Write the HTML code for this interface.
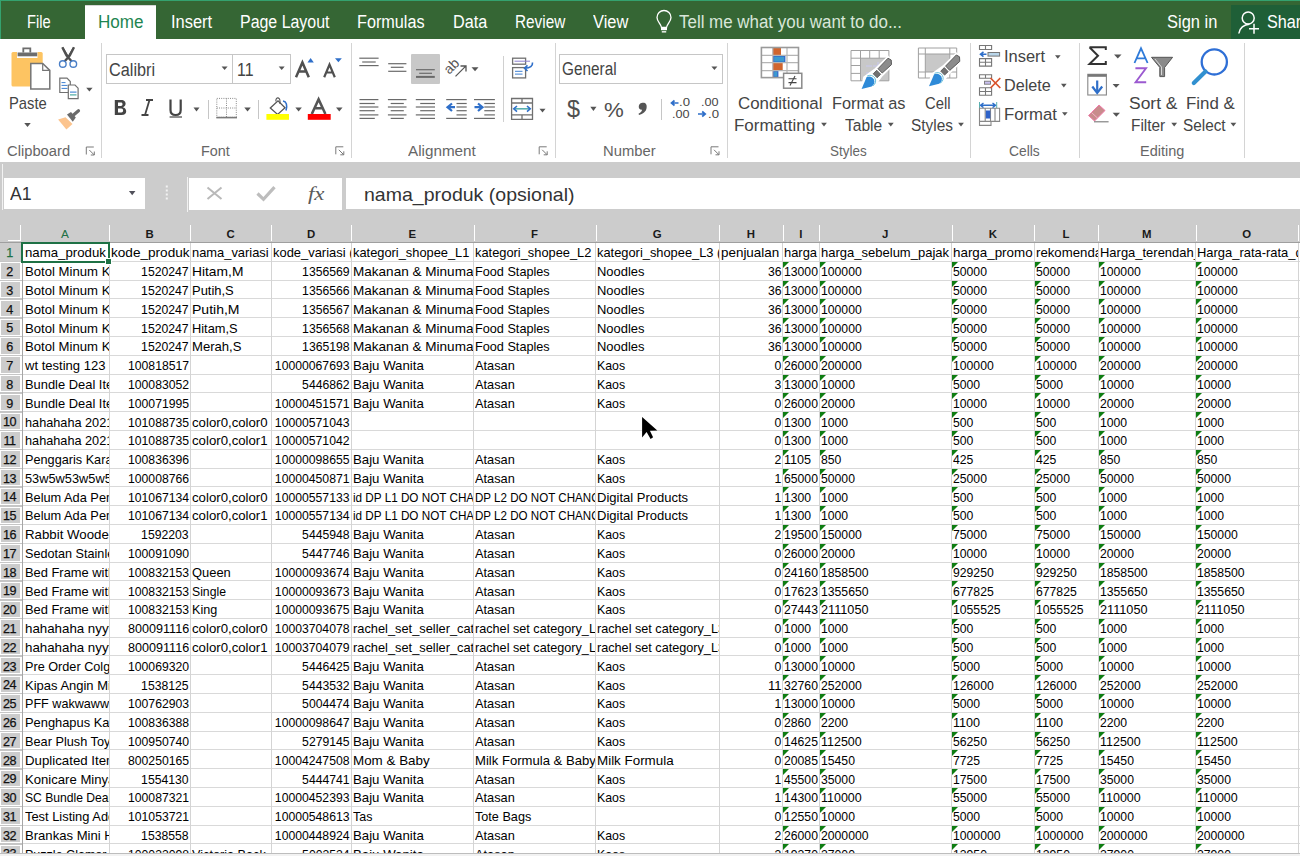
<!DOCTYPE html>
<html><head><meta charset="utf-8"><style>
html,body{margin:0;padding:0;}
body{width:1300px;height:856px;position:relative;overflow:hidden;background:#fff;font-family:"Liberation Sans", sans-serif;}
.t{position:absolute;white-space:pre;line-height:normal;}
.c{position:absolute;height:18px;overflow:hidden;font-size:13px;line-height:normal;color:#000;}
.c>div{margin-top:2.80px;}
.tri{position:absolute;width:0;height:0;border-top:6.5px solid #0e7d12;border-right:6.5px solid transparent;}
</style></head><body>
<div style='position:absolute;left:0px;top:0px;width:1300px;height:39px;background:#356634;'></div><div style='position:absolute;left:0px;top:0px;width:1300px;height:1px;background:#34a26f;'></div><div style='position:absolute;left:0px;top:0px;width:1px;height:39px;background:#34a26f;'></div><div style='position:absolute;left:85px;top:5px;width:71px;height:34px;background:#ffffff;'></div><div style='position:absolute;left:85px;top:5px;width:71px;height:1px;background:#d6d6d6;'></div><div style='position:absolute;left:1231px;top:5px;width:69px;height:34px;background:#1f5f37;'></div><div style='position:absolute;left:0px;top:39px;width:1300px;height:123px;background:#ffffff;'></div><div style='position:absolute;left:101px;top:43px;width:1px;height:115px;background:#d4d4d4;'></div><div style='position:absolute;left:351px;top:43px;width:1px;height:115px;background:#d4d4d4;'></div><div style='position:absolute;left:555px;top:43px;width:1px;height:115px;background:#d4d4d4;'></div><div style='position:absolute;left:727px;top:43px;width:1px;height:115px;background:#d4d4d4;'></div><div style='position:absolute;left:970px;top:43px;width:1px;height:115px;background:#d4d4d4;'></div><div style='position:absolute;left:1079px;top:43px;width:1px;height:115px;background:#d4d4d4;'></div><div style='position:absolute;left:1244px;top:43px;width:1px;height:115px;background:#d4d4d4;'></div><div style='position:absolute;left:105.5px;top:54px;width:126px;height:28px;border:1px solid #c6c6c6;background:#fff'></div><div style='position:absolute;left:232px;top:54px;width:57px;height:28px;border:1px solid #c6c6c6;border-left:1px solid #c6c6c6;background:#fff'></div><div style='position:absolute;left:559px;top:54px;width:162px;height:28px;border:1px solid #c6c6c6;background:#fff'></div><div style='position:absolute;left:0px;top:162px;width:1300px;height:80px;background:#cccccc;'></div><div style='position:absolute;left:4px;top:178px;width:141px;height:31px;background:#ffffff;'></div><div style='position:absolute;left:189px;top:178px;width:153px;height:32px;background:#ffffff;'></div><div style='position:absolute;left:346px;top:178px;width:954px;height:31px;background:#ffffff;'></div><div style='position:absolute;left:0px;top:242px;width:1300px;height:1px;background:#9f9f9f;'></div><div style='position:absolute;left:109px;top:225px;width:1px;height:16px;background:#ffffff'></div><div style='position:absolute;left:190px;top:225px;width:1px;height:16px;background:#ffffff'></div><div style='position:absolute;left:271px;top:225px;width:1px;height:16px;background:#ffffff'></div><div style='position:absolute;left:351px;top:225px;width:1px;height:16px;background:#ffffff'></div><div style='position:absolute;left:473.5px;top:225px;width:1px;height:16px;background:#ffffff'></div><div style='position:absolute;left:595.5px;top:225px;width:1px;height:16px;background:#ffffff'></div><div style='position:absolute;left:719px;top:225px;width:1px;height:16px;background:#ffffff'></div><div style='position:absolute;left:782.5px;top:225px;width:1px;height:16px;background:#ffffff'></div><div style='position:absolute;left:819px;top:225px;width:1px;height:16px;background:#ffffff'></div><div style='position:absolute;left:951.5px;top:225px;width:1px;height:16px;background:#ffffff'></div><div style='position:absolute;left:1034px;top:225px;width:1px;height:16px;background:#ffffff'></div><div style='position:absolute;left:1098px;top:225px;width:1px;height:16px;background:#ffffff'></div><div style='position:absolute;left:1195.5px;top:225px;width:1px;height:16px;background:#ffffff'></div><div style='position:absolute;left:1298px;top:225px;width:1px;height:16px;background:#ffffff'></div><div style='position:absolute;left:0px;top:243px;width:22px;height:613px;background:#c6c6c6;'></div><div style='position:absolute;left:21.6px;top:243px;width:1.4px;height:613px;background:#a6a6a6;'></div><div style='position:absolute;left:0px;top:243px;width:21.5px;height:17.889999999999986px;background:#cccccc;'></div><div style='position:absolute;left:0;top:262.29px;width:21.5px;height:17.39px;background:#ffffff'></div><div style='position:absolute;left:1.2px;top:263.29px;width:18.6px;height:15.39px;background:#cccccc'></div><div style='position:absolute;left:0;top:281.08px;width:21.5px;height:17.39px;background:#ffffff'></div><div style='position:absolute;left:1.2px;top:282.08px;width:18.6px;height:15.39px;background:#cccccc'></div><div style='position:absolute;left:0;top:299.87px;width:21.5px;height:17.39px;background:#ffffff'></div><div style='position:absolute;left:1.2px;top:300.87px;width:18.6px;height:15.39px;background:#cccccc'></div><div style='position:absolute;left:0;top:318.66px;width:21.5px;height:17.39px;background:#ffffff'></div><div style='position:absolute;left:1.2px;top:319.66px;width:18.6px;height:15.39px;background:#cccccc'></div><div style='position:absolute;left:0;top:337.45px;width:21.5px;height:17.39px;background:#ffffff'></div><div style='position:absolute;left:1.2px;top:338.45px;width:18.6px;height:15.39px;background:#cccccc'></div><div style='position:absolute;left:0;top:356.24px;width:21.5px;height:17.39px;background:#ffffff'></div><div style='position:absolute;left:1.2px;top:357.24px;width:18.6px;height:15.39px;background:#cccccc'></div><div style='position:absolute;left:0;top:375.03px;width:21.5px;height:17.39px;background:#ffffff'></div><div style='position:absolute;left:1.2px;top:376.03px;width:18.6px;height:15.39px;background:#cccccc'></div><div style='position:absolute;left:0;top:393.82px;width:21.5px;height:17.39px;background:#ffffff'></div><div style='position:absolute;left:1.2px;top:394.82px;width:18.6px;height:15.39px;background:#cccccc'></div><div style='position:absolute;left:0;top:412.61px;width:21.5px;height:17.39px;background:#ffffff'></div><div style='position:absolute;left:1.2px;top:413.61px;width:18.6px;height:15.39px;background:#cccccc'></div><div style='position:absolute;left:0;top:431.40px;width:21.5px;height:17.39px;background:#ffffff'></div><div style='position:absolute;left:1.2px;top:432.40px;width:18.6px;height:15.39px;background:#cccccc'></div><div style='position:absolute;left:0;top:450.19px;width:21.5px;height:17.39px;background:#ffffff'></div><div style='position:absolute;left:1.2px;top:451.19px;width:18.6px;height:15.39px;background:#cccccc'></div><div style='position:absolute;left:0;top:468.98px;width:21.5px;height:17.39px;background:#ffffff'></div><div style='position:absolute;left:1.2px;top:469.98px;width:18.6px;height:15.39px;background:#cccccc'></div><div style='position:absolute;left:0;top:487.77px;width:21.5px;height:17.39px;background:#ffffff'></div><div style='position:absolute;left:1.2px;top:488.77px;width:18.6px;height:15.39px;background:#cccccc'></div><div style='position:absolute;left:0;top:506.56px;width:21.5px;height:17.39px;background:#ffffff'></div><div style='position:absolute;left:1.2px;top:507.56px;width:18.6px;height:15.39px;background:#cccccc'></div><div style='position:absolute;left:0;top:525.35px;width:21.5px;height:17.39px;background:#ffffff'></div><div style='position:absolute;left:1.2px;top:526.35px;width:18.6px;height:15.39px;background:#cccccc'></div><div style='position:absolute;left:0;top:544.14px;width:21.5px;height:17.39px;background:#ffffff'></div><div style='position:absolute;left:1.2px;top:545.14px;width:18.6px;height:15.39px;background:#cccccc'></div><div style='position:absolute;left:0;top:562.93px;width:21.5px;height:17.39px;background:#ffffff'></div><div style='position:absolute;left:1.2px;top:563.93px;width:18.6px;height:15.39px;background:#cccccc'></div><div style='position:absolute;left:0;top:581.72px;width:21.5px;height:17.39px;background:#ffffff'></div><div style='position:absolute;left:1.2px;top:582.72px;width:18.6px;height:15.39px;background:#cccccc'></div><div style='position:absolute;left:0;top:600.51px;width:21.5px;height:17.39px;background:#ffffff'></div><div style='position:absolute;left:1.2px;top:601.51px;width:18.6px;height:15.39px;background:#cccccc'></div><div style='position:absolute;left:0;top:619.30px;width:21.5px;height:17.39px;background:#ffffff'></div><div style='position:absolute;left:1.2px;top:620.30px;width:18.6px;height:15.39px;background:#cccccc'></div><div style='position:absolute;left:0;top:638.09px;width:21.5px;height:17.39px;background:#ffffff'></div><div style='position:absolute;left:1.2px;top:639.09px;width:18.6px;height:15.39px;background:#cccccc'></div><div style='position:absolute;left:0;top:656.88px;width:21.5px;height:17.39px;background:#ffffff'></div><div style='position:absolute;left:1.2px;top:657.88px;width:18.6px;height:15.39px;background:#cccccc'></div><div style='position:absolute;left:0;top:675.67px;width:21.5px;height:17.39px;background:#ffffff'></div><div style='position:absolute;left:1.2px;top:676.67px;width:18.6px;height:15.39px;background:#cccccc'></div><div style='position:absolute;left:0;top:694.46px;width:21.5px;height:17.39px;background:#ffffff'></div><div style='position:absolute;left:1.2px;top:695.46px;width:18.6px;height:15.39px;background:#cccccc'></div><div style='position:absolute;left:0;top:713.25px;width:21.5px;height:17.39px;background:#ffffff'></div><div style='position:absolute;left:1.2px;top:714.25px;width:18.6px;height:15.39px;background:#cccccc'></div><div style='position:absolute;left:0;top:732.04px;width:21.5px;height:17.39px;background:#ffffff'></div><div style='position:absolute;left:1.2px;top:733.04px;width:18.6px;height:15.39px;background:#cccccc'></div><div style='position:absolute;left:0;top:750.83px;width:21.5px;height:17.39px;background:#ffffff'></div><div style='position:absolute;left:1.2px;top:751.83px;width:18.6px;height:15.39px;background:#cccccc'></div><div style='position:absolute;left:0;top:769.62px;width:21.5px;height:17.39px;background:#ffffff'></div><div style='position:absolute;left:1.2px;top:770.62px;width:18.6px;height:15.39px;background:#cccccc'></div><div style='position:absolute;left:0;top:788.41px;width:21.5px;height:17.39px;background:#ffffff'></div><div style='position:absolute;left:1.2px;top:789.41px;width:18.6px;height:15.39px;background:#cccccc'></div><div style='position:absolute;left:0;top:807.20px;width:21.5px;height:17.39px;background:#ffffff'></div><div style='position:absolute;left:1.2px;top:808.20px;width:18.6px;height:15.39px;background:#cccccc'></div><div style='position:absolute;left:0;top:825.99px;width:21.5px;height:17.39px;background:#ffffff'></div><div style='position:absolute;left:1.2px;top:826.99px;width:18.6px;height:15.39px;background:#cccccc'></div><div style='position:absolute;left:0;top:844.78px;width:21.5px;height:17.39px;background:#ffffff'></div><div style='position:absolute;left:1.2px;top:845.78px;width:18.6px;height:15.39px;background:#cccccc'></div><div style='position:absolute;left:23px;top:243px;width:1277px;height:613px;background:#ffffff;'></div><div style='position:absolute;left:23px;top:260.89px;width:1277px;height:1px;background:#d9d9d9'></div><div style='position:absolute;left:23px;top:279.68px;width:1277px;height:1px;background:#d9d9d9'></div><div style='position:absolute;left:23px;top:298.47px;width:1277px;height:1px;background:#d9d9d9'></div><div style='position:absolute;left:23px;top:317.26px;width:1277px;height:1px;background:#d9d9d9'></div><div style='position:absolute;left:23px;top:336.05px;width:1277px;height:1px;background:#d9d9d9'></div><div style='position:absolute;left:23px;top:354.84px;width:1277px;height:1px;background:#d9d9d9'></div><div style='position:absolute;left:23px;top:373.63px;width:1277px;height:1px;background:#d9d9d9'></div><div style='position:absolute;left:23px;top:392.42px;width:1277px;height:1px;background:#d9d9d9'></div><div style='position:absolute;left:23px;top:411.21px;width:1277px;height:1px;background:#d9d9d9'></div><div style='position:absolute;left:23px;top:430.00px;width:1277px;height:1px;background:#d9d9d9'></div><div style='position:absolute;left:23px;top:448.79px;width:1277px;height:1px;background:#d9d9d9'></div><div style='position:absolute;left:23px;top:467.58px;width:1277px;height:1px;background:#d9d9d9'></div><div style='position:absolute;left:23px;top:486.37px;width:1277px;height:1px;background:#d9d9d9'></div><div style='position:absolute;left:23px;top:505.16px;width:1277px;height:1px;background:#d9d9d9'></div><div style='position:absolute;left:23px;top:523.95px;width:1277px;height:1px;background:#d9d9d9'></div><div style='position:absolute;left:23px;top:542.74px;width:1277px;height:1px;background:#d9d9d9'></div><div style='position:absolute;left:23px;top:561.53px;width:1277px;height:1px;background:#d9d9d9'></div><div style='position:absolute;left:23px;top:580.32px;width:1277px;height:1px;background:#d9d9d9'></div><div style='position:absolute;left:23px;top:599.11px;width:1277px;height:1px;background:#d9d9d9'></div><div style='position:absolute;left:23px;top:617.90px;width:1277px;height:1px;background:#d9d9d9'></div><div style='position:absolute;left:23px;top:636.69px;width:1277px;height:1px;background:#d9d9d9'></div><div style='position:absolute;left:23px;top:655.48px;width:1277px;height:1px;background:#d9d9d9'></div><div style='position:absolute;left:23px;top:674.27px;width:1277px;height:1px;background:#d9d9d9'></div><div style='position:absolute;left:23px;top:693.06px;width:1277px;height:1px;background:#d9d9d9'></div><div style='position:absolute;left:23px;top:711.85px;width:1277px;height:1px;background:#d9d9d9'></div><div style='position:absolute;left:23px;top:730.64px;width:1277px;height:1px;background:#d9d9d9'></div><div style='position:absolute;left:23px;top:749.43px;width:1277px;height:1px;background:#d9d9d9'></div><div style='position:absolute;left:23px;top:768.22px;width:1277px;height:1px;background:#d9d9d9'></div><div style='position:absolute;left:23px;top:787.01px;width:1277px;height:1px;background:#d9d9d9'></div><div style='position:absolute;left:23px;top:805.80px;width:1277px;height:1px;background:#d9d9d9'></div><div style='position:absolute;left:23px;top:824.59px;width:1277px;height:1px;background:#d9d9d9'></div><div style='position:absolute;left:23px;top:843.38px;width:1277px;height:1px;background:#d9d9d9'></div><div style='position:absolute;left:23px;top:862.17px;width:1277px;height:1px;background:#d9d9d9'></div><div style='position:absolute;left:108.5px;top:243px;width:1px;height:613px;background:#d4d4d4'></div><div style='position:absolute;left:189.5px;top:243px;width:1px;height:613px;background:#d4d4d4'></div><div style='position:absolute;left:270.5px;top:243px;width:1px;height:613px;background:#d4d4d4'></div><div style='position:absolute;left:350.5px;top:243px;width:1px;height:613px;background:#d4d4d4'></div><div style='position:absolute;left:473.0px;top:243px;width:1px;height:613px;background:#d4d4d4'></div><div style='position:absolute;left:595.0px;top:243px;width:1px;height:613px;background:#d4d4d4'></div><div style='position:absolute;left:718.5px;top:243px;width:1px;height:613px;background:#d4d4d4'></div><div style='position:absolute;left:782.0px;top:243px;width:1px;height:613px;background:#d4d4d4'></div><div style='position:absolute;left:818.5px;top:243px;width:1px;height:613px;background:#d4d4d4'></div><div style='position:absolute;left:951.0px;top:243px;width:1px;height:613px;background:#d4d4d4'></div><div style='position:absolute;left:1033.5px;top:243px;width:1px;height:613px;background:#d4d4d4'></div><div style='position:absolute;left:1097.5px;top:243px;width:1px;height:613px;background:#d4d4d4'></div><div style='position:absolute;left:1195.0px;top:243px;width:1px;height:613px;background:#d4d4d4'></div><div style='position:absolute;left:1297.5px;top:243px;width:1px;height:613px;background:#d4d4d4'></div><div style='position:absolute;left:207.7px;top:99.6px;width:1px;height:19px;background:#c6c6c6;'></div><div style='position:absolute;left:258.3px;top:99.6px;width:1px;height:19px;background:#c6c6c6;'></div><div style='position:absolute;left:411.3px;top:54px;width:28.5px;height:29.7px;background:#c8c8c8;border-radius:1px;'></div><div style='position:absolute;left:503.4px;top:55.7px;width:1px;height:66px;background:#d0d0d0;'></div><div style='position:absolute;left:661px;top:99px;width:1px;height:20.7px;background:#c6c6c6;'></div>
<div class='c' style='left:21.5px;top:242.60px;width:87px'><div style='position:absolute;left:3.0px;top:0;white-space:pre;transform:scaleX(1.017);transform-origin:0 0'>nama_produk (opsional)</div></div><div class='c' style='left:109.5px;top:242.60px;width:80px'><div style='position:absolute;left:1.4px;top:0;white-space:pre;transform:scaleX(1.045);transform-origin:0 0'>kode_produk</div></div><div class='c' style='left:190.5px;top:242.60px;width:80px'><div style='position:absolute;left:1.4px;top:0;white-space:pre;transform:scaleX(0.991);transform-origin:0 0'>nama_variasi (opsional)</div></div><div class='c' style='left:271.5px;top:242.60px;width:79px'><div style='position:absolute;left:1.4px;top:0;white-space:pre;transform:scaleX(0.994);transform-origin:0 0'>kode_variasi (opsional)</div></div><div class='c' style='left:351.5px;top:242.60px;width:121.5px'><div style='position:absolute;left:1.4px;top:0;white-space:pre;transform:scaleX(0.988);transform-origin:0 0'>kategori_shopee_L1</div></div><div class='c' style='left:474.0px;top:242.60px;width:121.0px'><div style='position:absolute;left:1.4px;top:0;white-space:pre;transform:scaleX(0.988);transform-origin:0 0'>kategori_shopee_L2</div></div><div class='c' style='left:596.0px;top:242.60px;width:122.5px'><div style='position:absolute;left:1.4px;top:0;white-space:pre;transform:scaleX(0.989);transform-origin:0 0'>kategori_shopee_L3 (opsional)</div></div><div class='c' style='left:719.5px;top:242.60px;width:62.5px'><div style='position:absolute;left:1.4px;top:0;white-space:pre;transform:scaleX(1.032);transform-origin:0 0'>penjualan</div></div><div class='c' style='left:783.0px;top:242.60px;width:35.5px'><div style='position:absolute;left:1.4px;top:0;white-space:pre;transform:scaleX(0.992);transform-origin:0 0'>harga</div></div><div class='c' style='left:819.5px;top:242.60px;width:131.5px'><div style='position:absolute;left:1.4px;top:0;white-space:pre;transform:scaleX(1.001);transform-origin:0 0'>harga_sebelum_pajak</div></div><div class='c' style='left:952.0px;top:242.60px;width:81.5px'><div style='position:absolute;left:1.4px;top:0;white-space:pre;transform:scaleX(1.029);transform-origin:0 0'>harga_promo</div></div><div class='c' style='left:1034.5px;top:242.60px;width:63px'><div style='position:absolute;left:1.4px;top:0;white-space:pre;transform:scaleX(1.016);transform-origin:0 0'>rekomendasi</div></div><div class='c' style='left:1098.5px;top:242.60px;width:96.5px'><div style='position:absolute;left:1.4px;top:0;white-space:pre;transform:scaleX(0.997);transform-origin:0 0'>Harga_terendah_</div></div><div class='c' style='left:1196.0px;top:242.60px;width:101.5px'><div style='position:absolute;left:1.4px;top:0;white-space:pre;transform:scaleX(0.995);transform-origin:0 0'>Harga_rata-rata_d</div></div><div class='c' style='left:21.5px;top:261.39px;width:87px'><div style='position:absolute;left:3.0px;top:0;white-space:pre;transform:scaleX(1.011);transform-origin:0 0'>Botol Minum Kaca</div></div><div class='c' style='left:109.5px;top:261.39px;width:80px'><div style='position:absolute;right:0.6px;top:0;white-space:pre;transform:scaleX(0.939);transform-origin:100% 0'>1520247</div></div><div class='c' style='left:190.5px;top:261.39px;width:80px'><div style='position:absolute;left:1.4px;top:0;white-space:pre;transform:scaleX(1.062);transform-origin:0 0'>Hitam,M</div></div><div class='c' style='left:271.5px;top:261.39px;width:79px'><div style='position:absolute;right:0.6px;top:0;white-space:pre;transform:scaleX(0.939);transform-origin:100% 0'>1356569</div></div><div class='c' style='left:351.5px;top:261.39px;width:121.5px'><div style='position:absolute;left:1.4px;top:0;white-space:pre;transform:scaleX(1.042);transform-origin:0 0'>Makanan &amp; Minuman</div></div><div class='c' style='left:474.0px;top:261.39px;width:121.0px'><div style='position:absolute;left:1.4px;top:0;white-space:pre;transform:scaleX(0.975);transform-origin:0 0'>Food Staples</div></div><div class='c' style='left:596.0px;top:261.39px;width:122.5px'><div style='position:absolute;left:1.4px;top:0;white-space:pre;transform:scaleX(0.996);transform-origin:0 0'>Noodles</div></div><div class='c' style='left:719.5px;top:261.39px;width:62.5px'><div style='position:absolute;right:0.6px;top:0;white-space:pre;transform:scaleX(0.939);transform-origin:100% 0'>36</div></div><div class='c' style='left:783.0px;top:261.39px;width:35.5px'><div style='position:absolute;left:1.2px;top:0;white-space:pre;transform:scaleX(0.939);transform-origin:0 0'>13000</div></div><div class='tri' style='left:783.0px;top:261.89px'></div><div class='c' style='left:819.5px;top:261.39px;width:131.5px'><div style='position:absolute;left:1.2px;top:0;white-space:pre;transform:scaleX(0.939);transform-origin:0 0'>100000</div></div><div class='tri' style='left:819.5px;top:261.89px'></div><div class='c' style='left:952.0px;top:261.39px;width:81.5px'><div style='position:absolute;left:1.2px;top:0;white-space:pre;transform:scaleX(0.939);transform-origin:0 0'>50000</div></div><div class='tri' style='left:952.0px;top:261.89px'></div><div class='c' style='left:1034.5px;top:261.39px;width:63px'><div style='position:absolute;left:1.2px;top:0;white-space:pre;transform:scaleX(0.939);transform-origin:0 0'>50000</div></div><div class='tri' style='left:1034.5px;top:261.89px'></div><div class='c' style='left:1098.5px;top:261.39px;width:96.5px'><div style='position:absolute;left:1.2px;top:0;white-space:pre;transform:scaleX(0.939);transform-origin:0 0'>100000</div></div><div class='tri' style='left:1098.5px;top:261.89px'></div><div class='c' style='left:1196.0px;top:261.39px;width:101.5px'><div style='position:absolute;left:1.2px;top:0;white-space:pre;transform:scaleX(0.939);transform-origin:0 0'>100000</div></div><div class='tri' style='left:1196.0px;top:261.89px'></div><div class='c' style='left:21.5px;top:280.18px;width:87px'><div style='position:absolute;left:3.0px;top:0;white-space:pre;transform:scaleX(1.011);transform-origin:0 0'>Botol Minum Kaca</div></div><div class='c' style='left:109.5px;top:280.18px;width:80px'><div style='position:absolute;right:0.6px;top:0;white-space:pre;transform:scaleX(0.939);transform-origin:100% 0'>1520247</div></div><div class='c' style='left:190.5px;top:280.18px;width:80px'><div style='position:absolute;left:1.4px;top:0;white-space:pre;transform:scaleX(0.995);transform-origin:0 0'>Putih,S</div></div><div class='c' style='left:271.5px;top:280.18px;width:79px'><div style='position:absolute;right:0.6px;top:0;white-space:pre;transform:scaleX(0.939);transform-origin:100% 0'>1356566</div></div><div class='c' style='left:351.5px;top:280.18px;width:121.5px'><div style='position:absolute;left:1.4px;top:0;white-space:pre;transform:scaleX(1.042);transform-origin:0 0'>Makanan &amp; Minuman</div></div><div class='c' style='left:474.0px;top:280.18px;width:121.0px'><div style='position:absolute;left:1.4px;top:0;white-space:pre;transform:scaleX(0.975);transform-origin:0 0'>Food Staples</div></div><div class='c' style='left:596.0px;top:280.18px;width:122.5px'><div style='position:absolute;left:1.4px;top:0;white-space:pre;transform:scaleX(0.996);transform-origin:0 0'>Noodles</div></div><div class='c' style='left:719.5px;top:280.18px;width:62.5px'><div style='position:absolute;right:0.6px;top:0;white-space:pre;transform:scaleX(0.939);transform-origin:100% 0'>36</div></div><div class='c' style='left:783.0px;top:280.18px;width:35.5px'><div style='position:absolute;left:1.2px;top:0;white-space:pre;transform:scaleX(0.939);transform-origin:0 0'>13000</div></div><div class='tri' style='left:783.0px;top:280.68px'></div><div class='c' style='left:819.5px;top:280.18px;width:131.5px'><div style='position:absolute;left:1.2px;top:0;white-space:pre;transform:scaleX(0.939);transform-origin:0 0'>100000</div></div><div class='tri' style='left:819.5px;top:280.68px'></div><div class='c' style='left:952.0px;top:280.18px;width:81.5px'><div style='position:absolute;left:1.2px;top:0;white-space:pre;transform:scaleX(0.939);transform-origin:0 0'>50000</div></div><div class='tri' style='left:952.0px;top:280.68px'></div><div class='c' style='left:1034.5px;top:280.18px;width:63px'><div style='position:absolute;left:1.2px;top:0;white-space:pre;transform:scaleX(0.939);transform-origin:0 0'>50000</div></div><div class='tri' style='left:1034.5px;top:280.68px'></div><div class='c' style='left:1098.5px;top:280.18px;width:96.5px'><div style='position:absolute;left:1.2px;top:0;white-space:pre;transform:scaleX(0.939);transform-origin:0 0'>100000</div></div><div class='tri' style='left:1098.5px;top:280.68px'></div><div class='c' style='left:1196.0px;top:280.18px;width:101.5px'><div style='position:absolute;left:1.2px;top:0;white-space:pre;transform:scaleX(0.939);transform-origin:0 0'>100000</div></div><div class='tri' style='left:1196.0px;top:280.68px'></div><div class='c' style='left:21.5px;top:298.97px;width:87px'><div style='position:absolute;left:3.0px;top:0;white-space:pre;transform:scaleX(1.011);transform-origin:0 0'>Botol Minum Kaca</div></div><div class='c' style='left:109.5px;top:298.97px;width:80px'><div style='position:absolute;right:0.6px;top:0;white-space:pre;transform:scaleX(0.939);transform-origin:100% 0'>1520247</div></div><div class='c' style='left:190.5px;top:298.97px;width:80px'><div style='position:absolute;left:1.4px;top:0;white-space:pre;transform:scaleX(1.078);transform-origin:0 0'>Putih,M</div></div><div class='c' style='left:271.5px;top:298.97px;width:79px'><div style='position:absolute;right:0.6px;top:0;white-space:pre;transform:scaleX(0.939);transform-origin:100% 0'>1356567</div></div><div class='c' style='left:351.5px;top:298.97px;width:121.5px'><div style='position:absolute;left:1.4px;top:0;white-space:pre;transform:scaleX(1.042);transform-origin:0 0'>Makanan &amp; Minuman</div></div><div class='c' style='left:474.0px;top:298.97px;width:121.0px'><div style='position:absolute;left:1.4px;top:0;white-space:pre;transform:scaleX(0.975);transform-origin:0 0'>Food Staples</div></div><div class='c' style='left:596.0px;top:298.97px;width:122.5px'><div style='position:absolute;left:1.4px;top:0;white-space:pre;transform:scaleX(0.996);transform-origin:0 0'>Noodles</div></div><div class='c' style='left:719.5px;top:298.97px;width:62.5px'><div style='position:absolute;right:0.6px;top:0;white-space:pre;transform:scaleX(0.939);transform-origin:100% 0'>36</div></div><div class='c' style='left:783.0px;top:298.97px;width:35.5px'><div style='position:absolute;left:1.2px;top:0;white-space:pre;transform:scaleX(0.939);transform-origin:0 0'>13000</div></div><div class='tri' style='left:783.0px;top:299.47px'></div><div class='c' style='left:819.5px;top:298.97px;width:131.5px'><div style='position:absolute;left:1.2px;top:0;white-space:pre;transform:scaleX(0.939);transform-origin:0 0'>100000</div></div><div class='tri' style='left:819.5px;top:299.47px'></div><div class='c' style='left:952.0px;top:298.97px;width:81.5px'><div style='position:absolute;left:1.2px;top:0;white-space:pre;transform:scaleX(0.939);transform-origin:0 0'>50000</div></div><div class='tri' style='left:952.0px;top:299.47px'></div><div class='c' style='left:1034.5px;top:298.97px;width:63px'><div style='position:absolute;left:1.2px;top:0;white-space:pre;transform:scaleX(0.939);transform-origin:0 0'>50000</div></div><div class='tri' style='left:1034.5px;top:299.47px'></div><div class='c' style='left:1098.5px;top:298.97px;width:96.5px'><div style='position:absolute;left:1.2px;top:0;white-space:pre;transform:scaleX(0.939);transform-origin:0 0'>100000</div></div><div class='tri' style='left:1098.5px;top:299.47px'></div><div class='c' style='left:1196.0px;top:298.97px;width:101.5px'><div style='position:absolute;left:1.2px;top:0;white-space:pre;transform:scaleX(0.939);transform-origin:0 0'>100000</div></div><div class='tri' style='left:1196.0px;top:299.47px'></div><div class='c' style='left:21.5px;top:317.76px;width:87px'><div style='position:absolute;left:3.0px;top:0;white-space:pre;transform:scaleX(1.011);transform-origin:0 0'>Botol Minum Kaca</div></div><div class='c' style='left:109.5px;top:317.76px;width:80px'><div style='position:absolute;right:0.6px;top:0;white-space:pre;transform:scaleX(0.939);transform-origin:100% 0'>1520247</div></div><div class='c' style='left:190.5px;top:317.76px;width:80px'><div style='position:absolute;left:1.4px;top:0;white-space:pre;transform:scaleX(0.986);transform-origin:0 0'>Hitam,S</div></div><div class='c' style='left:271.5px;top:317.76px;width:79px'><div style='position:absolute;right:0.6px;top:0;white-space:pre;transform:scaleX(0.939);transform-origin:100% 0'>1356568</div></div><div class='c' style='left:351.5px;top:317.76px;width:121.5px'><div style='position:absolute;left:1.4px;top:0;white-space:pre;transform:scaleX(1.042);transform-origin:0 0'>Makanan &amp; Minuman</div></div><div class='c' style='left:474.0px;top:317.76px;width:121.0px'><div style='position:absolute;left:1.4px;top:0;white-space:pre;transform:scaleX(0.975);transform-origin:0 0'>Food Staples</div></div><div class='c' style='left:596.0px;top:317.76px;width:122.5px'><div style='position:absolute;left:1.4px;top:0;white-space:pre;transform:scaleX(0.996);transform-origin:0 0'>Noodles</div></div><div class='c' style='left:719.5px;top:317.76px;width:62.5px'><div style='position:absolute;right:0.6px;top:0;white-space:pre;transform:scaleX(0.939);transform-origin:100% 0'>36</div></div><div class='c' style='left:783.0px;top:317.76px;width:35.5px'><div style='position:absolute;left:1.2px;top:0;white-space:pre;transform:scaleX(0.939);transform-origin:0 0'>13000</div></div><div class='tri' style='left:783.0px;top:318.26px'></div><div class='c' style='left:819.5px;top:317.76px;width:131.5px'><div style='position:absolute;left:1.2px;top:0;white-space:pre;transform:scaleX(0.939);transform-origin:0 0'>100000</div></div><div class='tri' style='left:819.5px;top:318.26px'></div><div class='c' style='left:952.0px;top:317.76px;width:81.5px'><div style='position:absolute;left:1.2px;top:0;white-space:pre;transform:scaleX(0.939);transform-origin:0 0'>50000</div></div><div class='tri' style='left:952.0px;top:318.26px'></div><div class='c' style='left:1034.5px;top:317.76px;width:63px'><div style='position:absolute;left:1.2px;top:0;white-space:pre;transform:scaleX(0.939);transform-origin:0 0'>50000</div></div><div class='tri' style='left:1034.5px;top:318.26px'></div><div class='c' style='left:1098.5px;top:317.76px;width:96.5px'><div style='position:absolute;left:1.2px;top:0;white-space:pre;transform:scaleX(0.939);transform-origin:0 0'>100000</div></div><div class='tri' style='left:1098.5px;top:318.26px'></div><div class='c' style='left:1196.0px;top:317.76px;width:101.5px'><div style='position:absolute;left:1.2px;top:0;white-space:pre;transform:scaleX(0.939);transform-origin:0 0'>100000</div></div><div class='tri' style='left:1196.0px;top:318.26px'></div><div class='c' style='left:21.5px;top:336.55px;width:87px'><div style='position:absolute;left:3.0px;top:0;white-space:pre;transform:scaleX(1.011);transform-origin:0 0'>Botol Minum Kaca</div></div><div class='c' style='left:109.5px;top:336.55px;width:80px'><div style='position:absolute;right:0.6px;top:0;white-space:pre;transform:scaleX(0.939);transform-origin:100% 0'>1520247</div></div><div class='c' style='left:190.5px;top:336.55px;width:80px'><div style='position:absolute;left:1.4px;top:0;white-space:pre;transform:scaleX(1.007);transform-origin:0 0'>Merah,S</div></div><div class='c' style='left:271.5px;top:336.55px;width:79px'><div style='position:absolute;right:0.6px;top:0;white-space:pre;transform:scaleX(0.939);transform-origin:100% 0'>1365198</div></div><div class='c' style='left:351.5px;top:336.55px;width:121.5px'><div style='position:absolute;left:1.4px;top:0;white-space:pre;transform:scaleX(1.042);transform-origin:0 0'>Makanan &amp; Minuman</div></div><div class='c' style='left:474.0px;top:336.55px;width:121.0px'><div style='position:absolute;left:1.4px;top:0;white-space:pre;transform:scaleX(0.975);transform-origin:0 0'>Food Staples</div></div><div class='c' style='left:596.0px;top:336.55px;width:122.5px'><div style='position:absolute;left:1.4px;top:0;white-space:pre;transform:scaleX(0.996);transform-origin:0 0'>Noodles</div></div><div class='c' style='left:719.5px;top:336.55px;width:62.5px'><div style='position:absolute;right:0.6px;top:0;white-space:pre;transform:scaleX(0.939);transform-origin:100% 0'>36</div></div><div class='c' style='left:783.0px;top:336.55px;width:35.5px'><div style='position:absolute;left:1.2px;top:0;white-space:pre;transform:scaleX(0.939);transform-origin:0 0'>13000</div></div><div class='tri' style='left:783.0px;top:337.05px'></div><div class='c' style='left:819.5px;top:336.55px;width:131.5px'><div style='position:absolute;left:1.2px;top:0;white-space:pre;transform:scaleX(0.939);transform-origin:0 0'>100000</div></div><div class='tri' style='left:819.5px;top:337.05px'></div><div class='c' style='left:952.0px;top:336.55px;width:81.5px'><div style='position:absolute;left:1.2px;top:0;white-space:pre;transform:scaleX(0.939);transform-origin:0 0'>50000</div></div><div class='tri' style='left:952.0px;top:337.05px'></div><div class='c' style='left:1034.5px;top:336.55px;width:63px'><div style='position:absolute;left:1.2px;top:0;white-space:pre;transform:scaleX(0.939);transform-origin:0 0'>50000</div></div><div class='tri' style='left:1034.5px;top:337.05px'></div><div class='c' style='left:1098.5px;top:336.55px;width:96.5px'><div style='position:absolute;left:1.2px;top:0;white-space:pre;transform:scaleX(0.939);transform-origin:0 0'>100000</div></div><div class='tri' style='left:1098.5px;top:337.05px'></div><div class='c' style='left:1196.0px;top:336.55px;width:101.5px'><div style='position:absolute;left:1.2px;top:0;white-space:pre;transform:scaleX(0.939);transform-origin:0 0'>100000</div></div><div class='tri' style='left:1196.0px;top:337.05px'></div><div class='c' style='left:21.5px;top:355.34px;width:87px'><div style='position:absolute;left:3.0px;top:0;white-space:pre;transform:scaleX(1.004);transform-origin:0 0'>wt testing 123</div></div><div class='c' style='left:109.5px;top:355.34px;width:80px'><div style='position:absolute;right:0.6px;top:0;white-space:pre;transform:scaleX(0.939);transform-origin:100% 0'>100818517</div></div><div class='c' style='left:271.5px;top:355.34px;width:79px'><div style='position:absolute;right:0.6px;top:0;white-space:pre;transform:scaleX(0.939);transform-origin:100% 0'>10000067693</div></div><div class='c' style='left:351.5px;top:355.34px;width:121.5px'><div style='position:absolute;left:1.4px;top:0;white-space:pre;transform:scaleX(1.017);transform-origin:0 0'>Baju Wanita</div></div><div class='c' style='left:474.0px;top:355.34px;width:121.0px'><div style='position:absolute;left:1.4px;top:0;white-space:pre;transform:scaleX(0.982);transform-origin:0 0'>Atasan</div></div><div class='c' style='left:596.0px;top:355.34px;width:122.5px'><div style='position:absolute;left:1.4px;top:0;white-space:pre;transform:scaleX(0.949);transform-origin:0 0'>Kaos</div></div><div class='c' style='left:719.5px;top:355.34px;width:62.5px'><div style='position:absolute;right:0.6px;top:0;white-space:pre;transform:scaleX(0.939);transform-origin:100% 0'>0</div></div><div class='c' style='left:783.0px;top:355.34px;width:35.5px'><div style='position:absolute;left:1.2px;top:0;white-space:pre;transform:scaleX(0.939);transform-origin:0 0'>26000</div></div><div class='tri' style='left:783.0px;top:355.84px'></div><div class='c' style='left:819.5px;top:355.34px;width:131.5px'><div style='position:absolute;left:1.2px;top:0;white-space:pre;transform:scaleX(0.939);transform-origin:0 0'>200000</div></div><div class='tri' style='left:819.5px;top:355.84px'></div><div class='c' style='left:952.0px;top:355.34px;width:81.5px'><div style='position:absolute;left:1.2px;top:0;white-space:pre;transform:scaleX(0.939);transform-origin:0 0'>100000</div></div><div class='tri' style='left:952.0px;top:355.84px'></div><div class='c' style='left:1034.5px;top:355.34px;width:63px'><div style='position:absolute;left:1.2px;top:0;white-space:pre;transform:scaleX(0.939);transform-origin:0 0'>100000</div></div><div class='tri' style='left:1034.5px;top:355.84px'></div><div class='c' style='left:1098.5px;top:355.34px;width:96.5px'><div style='position:absolute;left:1.2px;top:0;white-space:pre;transform:scaleX(0.939);transform-origin:0 0'>200000</div></div><div class='tri' style='left:1098.5px;top:355.84px'></div><div class='c' style='left:1196.0px;top:355.34px;width:101.5px'><div style='position:absolute;left:1.2px;top:0;white-space:pre;transform:scaleX(0.939);transform-origin:0 0'>200000</div></div><div class='tri' style='left:1196.0px;top:355.84px'></div><div class='c' style='left:21.5px;top:374.13px;width:87px'><div style='position:absolute;left:3.0px;top:0;white-space:pre;transform:scaleX(0.992);transform-origin:0 0'>Bundle Deal Item</div></div><div class='c' style='left:109.5px;top:374.13px;width:80px'><div style='position:absolute;right:0.6px;top:0;white-space:pre;transform:scaleX(0.939);transform-origin:100% 0'>100083052</div></div><div class='c' style='left:271.5px;top:374.13px;width:79px'><div style='position:absolute;right:0.6px;top:0;white-space:pre;transform:scaleX(0.939);transform-origin:100% 0'>5446862</div></div><div class='c' style='left:351.5px;top:374.13px;width:121.5px'><div style='position:absolute;left:1.4px;top:0;white-space:pre;transform:scaleX(1.017);transform-origin:0 0'>Baju Wanita</div></div><div class='c' style='left:474.0px;top:374.13px;width:121.0px'><div style='position:absolute;left:1.4px;top:0;white-space:pre;transform:scaleX(0.982);transform-origin:0 0'>Atasan</div></div><div class='c' style='left:596.0px;top:374.13px;width:122.5px'><div style='position:absolute;left:1.4px;top:0;white-space:pre;transform:scaleX(0.949);transform-origin:0 0'>Kaos</div></div><div class='c' style='left:719.5px;top:374.13px;width:62.5px'><div style='position:absolute;right:0.6px;top:0;white-space:pre;transform:scaleX(0.939);transform-origin:100% 0'>3</div></div><div class='c' style='left:783.0px;top:374.13px;width:35.5px'><div style='position:absolute;left:1.2px;top:0;white-space:pre;transform:scaleX(0.939);transform-origin:0 0'>13000</div></div><div class='tri' style='left:783.0px;top:374.63px'></div><div class='c' style='left:819.5px;top:374.13px;width:131.5px'><div style='position:absolute;left:1.2px;top:0;white-space:pre;transform:scaleX(0.939);transform-origin:0 0'>10000</div></div><div class='tri' style='left:819.5px;top:374.63px'></div><div class='c' style='left:952.0px;top:374.13px;width:81.5px'><div style='position:absolute;left:1.2px;top:0;white-space:pre;transform:scaleX(0.939);transform-origin:0 0'>5000</div></div><div class='tri' style='left:952.0px;top:374.63px'></div><div class='c' style='left:1034.5px;top:374.13px;width:63px'><div style='position:absolute;left:1.2px;top:0;white-space:pre;transform:scaleX(0.939);transform-origin:0 0'>5000</div></div><div class='tri' style='left:1034.5px;top:374.63px'></div><div class='c' style='left:1098.5px;top:374.13px;width:96.5px'><div style='position:absolute;left:1.2px;top:0;white-space:pre;transform:scaleX(0.939);transform-origin:0 0'>10000</div></div><div class='tri' style='left:1098.5px;top:374.63px'></div><div class='c' style='left:1196.0px;top:374.13px;width:101.5px'><div style='position:absolute;left:1.2px;top:0;white-space:pre;transform:scaleX(0.939);transform-origin:0 0'>10000</div></div><div class='tri' style='left:1196.0px;top:374.63px'></div><div class='c' style='left:21.5px;top:392.92px;width:87px'><div style='position:absolute;left:3.0px;top:0;white-space:pre;transform:scaleX(0.992);transform-origin:0 0'>Bundle Deal Item</div></div><div class='c' style='left:109.5px;top:392.92px;width:80px'><div style='position:absolute;right:0.6px;top:0;white-space:pre;transform:scaleX(0.939);transform-origin:100% 0'>100071995</div></div><div class='c' style='left:271.5px;top:392.92px;width:79px'><div style='position:absolute;right:0.6px;top:0;white-space:pre;transform:scaleX(0.939);transform-origin:100% 0'>10000451571</div></div><div class='c' style='left:351.5px;top:392.92px;width:121.5px'><div style='position:absolute;left:1.4px;top:0;white-space:pre;transform:scaleX(1.017);transform-origin:0 0'>Baju Wanita</div></div><div class='c' style='left:474.0px;top:392.92px;width:121.0px'><div style='position:absolute;left:1.4px;top:0;white-space:pre;transform:scaleX(0.982);transform-origin:0 0'>Atasan</div></div><div class='c' style='left:596.0px;top:392.92px;width:122.5px'><div style='position:absolute;left:1.4px;top:0;white-space:pre;transform:scaleX(0.949);transform-origin:0 0'>Kaos</div></div><div class='c' style='left:719.5px;top:392.92px;width:62.5px'><div style='position:absolute;right:0.6px;top:0;white-space:pre;transform:scaleX(0.939);transform-origin:100% 0'>0</div></div><div class='c' style='left:783.0px;top:392.92px;width:35.5px'><div style='position:absolute;left:1.2px;top:0;white-space:pre;transform:scaleX(0.939);transform-origin:0 0'>26000</div></div><div class='tri' style='left:783.0px;top:393.42px'></div><div class='c' style='left:819.5px;top:392.92px;width:131.5px'><div style='position:absolute;left:1.2px;top:0;white-space:pre;transform:scaleX(0.939);transform-origin:0 0'>20000</div></div><div class='tri' style='left:819.5px;top:393.42px'></div><div class='c' style='left:952.0px;top:392.92px;width:81.5px'><div style='position:absolute;left:1.2px;top:0;white-space:pre;transform:scaleX(0.939);transform-origin:0 0'>10000</div></div><div class='tri' style='left:952.0px;top:393.42px'></div><div class='c' style='left:1034.5px;top:392.92px;width:63px'><div style='position:absolute;left:1.2px;top:0;white-space:pre;transform:scaleX(0.939);transform-origin:0 0'>10000</div></div><div class='tri' style='left:1034.5px;top:393.42px'></div><div class='c' style='left:1098.5px;top:392.92px;width:96.5px'><div style='position:absolute;left:1.2px;top:0;white-space:pre;transform:scaleX(0.939);transform-origin:0 0'>20000</div></div><div class='tri' style='left:1098.5px;top:393.42px'></div><div class='c' style='left:1196.0px;top:392.92px;width:101.5px'><div style='position:absolute;left:1.2px;top:0;white-space:pre;transform:scaleX(0.939);transform-origin:0 0'>20000</div></div><div class='tri' style='left:1196.0px;top:393.42px'></div><div class='c' style='left:21.5px;top:411.71px;width:87px'><div style='position:absolute;left:3.0px;top:0;white-space:pre;transform:scaleX(0.977);transform-origin:0 0'>hahahaha 2021</div></div><div class='c' style='left:109.5px;top:411.71px;width:80px'><div style='position:absolute;right:0.6px;top:0;white-space:pre;transform:scaleX(0.939);transform-origin:100% 0'>101088735</div></div><div class='c' style='left:190.5px;top:411.71px;width:80px'><div style='position:absolute;left:1.4px;top:0;white-space:pre;transform:scaleX(1.016);transform-origin:0 0'>color0,color0</div></div><div class='c' style='left:271.5px;top:411.71px;width:79px'><div style='position:absolute;right:0.6px;top:0;white-space:pre;transform:scaleX(0.939);transform-origin:100% 0'>10000571043</div></div><div class='c' style='left:719.5px;top:411.71px;width:62.5px'><div style='position:absolute;right:0.6px;top:0;white-space:pre;transform:scaleX(0.939);transform-origin:100% 0'>0</div></div><div class='c' style='left:783.0px;top:411.71px;width:35.5px'><div style='position:absolute;left:1.2px;top:0;white-space:pre;transform:scaleX(0.939);transform-origin:0 0'>1300</div></div><div class='tri' style='left:783.0px;top:412.21px'></div><div class='c' style='left:819.5px;top:411.71px;width:131.5px'><div style='position:absolute;left:1.2px;top:0;white-space:pre;transform:scaleX(0.939);transform-origin:0 0'>1000</div></div><div class='tri' style='left:819.5px;top:412.21px'></div><div class='c' style='left:952.0px;top:411.71px;width:81.5px'><div style='position:absolute;left:1.2px;top:0;white-space:pre;transform:scaleX(0.939);transform-origin:0 0'>500</div></div><div class='tri' style='left:952.0px;top:412.21px'></div><div class='c' style='left:1034.5px;top:411.71px;width:63px'><div style='position:absolute;left:1.2px;top:0;white-space:pre;transform:scaleX(0.939);transform-origin:0 0'>500</div></div><div class='tri' style='left:1034.5px;top:412.21px'></div><div class='c' style='left:1098.5px;top:411.71px;width:96.5px'><div style='position:absolute;left:1.2px;top:0;white-space:pre;transform:scaleX(0.939);transform-origin:0 0'>1000</div></div><div class='tri' style='left:1098.5px;top:412.21px'></div><div class='c' style='left:1196.0px;top:411.71px;width:101.5px'><div style='position:absolute;left:1.2px;top:0;white-space:pre;transform:scaleX(0.939);transform-origin:0 0'>1000</div></div><div class='tri' style='left:1196.0px;top:412.21px'></div><div class='c' style='left:21.5px;top:430.50px;width:87px'><div style='position:absolute;left:3.0px;top:0;white-space:pre;transform:scaleX(0.977);transform-origin:0 0'>hahahaha 2021</div></div><div class='c' style='left:109.5px;top:430.50px;width:80px'><div style='position:absolute;right:0.6px;top:0;white-space:pre;transform:scaleX(0.939);transform-origin:100% 0'>101088735</div></div><div class='c' style='left:190.5px;top:430.50px;width:80px'><div style='position:absolute;left:1.4px;top:0;white-space:pre;transform:scaleX(1.016);transform-origin:0 0'>color0,color1</div></div><div class='c' style='left:271.5px;top:430.50px;width:79px'><div style='position:absolute;right:0.6px;top:0;white-space:pre;transform:scaleX(0.939);transform-origin:100% 0'>10000571042</div></div><div class='c' style='left:719.5px;top:430.50px;width:62.5px'><div style='position:absolute;right:0.6px;top:0;white-space:pre;transform:scaleX(0.939);transform-origin:100% 0'>0</div></div><div class='c' style='left:783.0px;top:430.50px;width:35.5px'><div style='position:absolute;left:1.2px;top:0;white-space:pre;transform:scaleX(0.939);transform-origin:0 0'>1300</div></div><div class='tri' style='left:783.0px;top:431.00px'></div><div class='c' style='left:819.5px;top:430.50px;width:131.5px'><div style='position:absolute;left:1.2px;top:0;white-space:pre;transform:scaleX(0.939);transform-origin:0 0'>1000</div></div><div class='tri' style='left:819.5px;top:431.00px'></div><div class='c' style='left:952.0px;top:430.50px;width:81.5px'><div style='position:absolute;left:1.2px;top:0;white-space:pre;transform:scaleX(0.939);transform-origin:0 0'>500</div></div><div class='tri' style='left:952.0px;top:431.00px'></div><div class='c' style='left:1034.5px;top:430.50px;width:63px'><div style='position:absolute;left:1.2px;top:0;white-space:pre;transform:scaleX(0.939);transform-origin:0 0'>500</div></div><div class='tri' style='left:1034.5px;top:431.00px'></div><div class='c' style='left:1098.5px;top:430.50px;width:96.5px'><div style='position:absolute;left:1.2px;top:0;white-space:pre;transform:scaleX(0.939);transform-origin:0 0'>1000</div></div><div class='tri' style='left:1098.5px;top:431.00px'></div><div class='c' style='left:1196.0px;top:430.50px;width:101.5px'><div style='position:absolute;left:1.2px;top:0;white-space:pre;transform:scaleX(0.939);transform-origin:0 0'>1000</div></div><div class='tri' style='left:1196.0px;top:431.00px'></div><div class='c' style='left:21.5px;top:449.29px;width:87px'><div style='position:absolute;left:3.0px;top:0;white-space:pre;transform:scaleX(0.976);transform-origin:0 0'>Penggaris Karakter</div></div><div class='c' style='left:109.5px;top:449.29px;width:80px'><div style='position:absolute;right:0.6px;top:0;white-space:pre;transform:scaleX(0.939);transform-origin:100% 0'>100836396</div></div><div class='c' style='left:271.5px;top:449.29px;width:79px'><div style='position:absolute;right:0.6px;top:0;white-space:pre;transform:scaleX(0.939);transform-origin:100% 0'>10000098655</div></div><div class='c' style='left:351.5px;top:449.29px;width:121.5px'><div style='position:absolute;left:1.4px;top:0;white-space:pre;transform:scaleX(1.017);transform-origin:0 0'>Baju Wanita</div></div><div class='c' style='left:474.0px;top:449.29px;width:121.0px'><div style='position:absolute;left:1.4px;top:0;white-space:pre;transform:scaleX(0.982);transform-origin:0 0'>Atasan</div></div><div class='c' style='left:596.0px;top:449.29px;width:122.5px'><div style='position:absolute;left:1.4px;top:0;white-space:pre;transform:scaleX(0.949);transform-origin:0 0'>Kaos</div></div><div class='c' style='left:719.5px;top:449.29px;width:62.5px'><div style='position:absolute;right:0.6px;top:0;white-space:pre;transform:scaleX(0.939);transform-origin:100% 0'>2</div></div><div class='c' style='left:783.0px;top:449.29px;width:35.5px'><div style='position:absolute;left:1.2px;top:0;white-space:pre;transform:scaleX(0.971);transform-origin:0 0'>1105</div></div><div class='tri' style='left:783.0px;top:449.79px'></div><div class='c' style='left:819.5px;top:449.29px;width:131.5px'><div style='position:absolute;left:1.2px;top:0;white-space:pre;transform:scaleX(0.939);transform-origin:0 0'>850</div></div><div class='tri' style='left:819.5px;top:449.79px'></div><div class='c' style='left:952.0px;top:449.29px;width:81.5px'><div style='position:absolute;left:1.2px;top:0;white-space:pre;transform:scaleX(0.939);transform-origin:0 0'>425</div></div><div class='tri' style='left:952.0px;top:449.79px'></div><div class='c' style='left:1034.5px;top:449.29px;width:63px'><div style='position:absolute;left:1.2px;top:0;white-space:pre;transform:scaleX(0.939);transform-origin:0 0'>425</div></div><div class='tri' style='left:1034.5px;top:449.79px'></div><div class='c' style='left:1098.5px;top:449.29px;width:96.5px'><div style='position:absolute;left:1.2px;top:0;white-space:pre;transform:scaleX(0.939);transform-origin:0 0'>850</div></div><div class='tri' style='left:1098.5px;top:449.79px'></div><div class='c' style='left:1196.0px;top:449.29px;width:101.5px'><div style='position:absolute;left:1.2px;top:0;white-space:pre;transform:scaleX(0.939);transform-origin:0 0'>850</div></div><div class='tri' style='left:1196.0px;top:449.79px'></div><div class='c' style='left:21.5px;top:468.08px;width:87px'><div style='position:absolute;left:3.0px;top:0;white-space:pre;transform:scaleX(0.984);transform-origin:0 0'>53w5w53w5w5w</div></div><div class='c' style='left:109.5px;top:468.08px;width:80px'><div style='position:absolute;right:0.6px;top:0;white-space:pre;transform:scaleX(0.939);transform-origin:100% 0'>100008766</div></div><div class='c' style='left:271.5px;top:468.08px;width:79px'><div style='position:absolute;right:0.6px;top:0;white-space:pre;transform:scaleX(0.939);transform-origin:100% 0'>10000450871</div></div><div class='c' style='left:351.5px;top:468.08px;width:121.5px'><div style='position:absolute;left:1.4px;top:0;white-space:pre;transform:scaleX(1.017);transform-origin:0 0'>Baju Wanita</div></div><div class='c' style='left:474.0px;top:468.08px;width:121.0px'><div style='position:absolute;left:1.4px;top:0;white-space:pre;transform:scaleX(0.982);transform-origin:0 0'>Atasan</div></div><div class='c' style='left:596.0px;top:468.08px;width:122.5px'><div style='position:absolute;left:1.4px;top:0;white-space:pre;transform:scaleX(0.949);transform-origin:0 0'>Kaos</div></div><div class='c' style='left:719.5px;top:468.08px;width:62.5px'><div style='position:absolute;right:0.6px;top:0;white-space:pre;transform:scaleX(0.939);transform-origin:100% 0'>1</div></div><div class='c' style='left:783.0px;top:468.08px;width:35.5px'><div style='position:absolute;left:1.2px;top:0;white-space:pre;transform:scaleX(0.939);transform-origin:0 0'>65000</div></div><div class='tri' style='left:783.0px;top:468.58px'></div><div class='c' style='left:819.5px;top:468.08px;width:131.5px'><div style='position:absolute;left:1.2px;top:0;white-space:pre;transform:scaleX(0.939);transform-origin:0 0'>50000</div></div><div class='tri' style='left:819.5px;top:468.58px'></div><div class='c' style='left:952.0px;top:468.08px;width:81.5px'><div style='position:absolute;left:1.2px;top:0;white-space:pre;transform:scaleX(0.939);transform-origin:0 0'>25000</div></div><div class='tri' style='left:952.0px;top:468.58px'></div><div class='c' style='left:1034.5px;top:468.08px;width:63px'><div style='position:absolute;left:1.2px;top:0;white-space:pre;transform:scaleX(0.939);transform-origin:0 0'>25000</div></div><div class='tri' style='left:1034.5px;top:468.58px'></div><div class='c' style='left:1098.5px;top:468.08px;width:96.5px'><div style='position:absolute;left:1.2px;top:0;white-space:pre;transform:scaleX(0.939);transform-origin:0 0'>50000</div></div><div class='tri' style='left:1098.5px;top:468.58px'></div><div class='c' style='left:1196.0px;top:468.08px;width:101.5px'><div style='position:absolute;left:1.2px;top:0;white-space:pre;transform:scaleX(0.939);transform-origin:0 0'>50000</div></div><div class='tri' style='left:1196.0px;top:468.58px'></div><div class='c' style='left:21.5px;top:486.87px;width:87px'><div style='position:absolute;left:3.0px;top:0;white-space:pre;transform:scaleX(0.983);transform-origin:0 0'>Belum Ada Pembeli</div></div><div class='c' style='left:109.5px;top:486.87px;width:80px'><div style='position:absolute;right:0.6px;top:0;white-space:pre;transform:scaleX(0.939);transform-origin:100% 0'>101067134</div></div><div class='c' style='left:190.5px;top:486.87px;width:80px'><div style='position:absolute;left:1.4px;top:0;white-space:pre;transform:scaleX(1.016);transform-origin:0 0'>color0,color0</div></div><div class='c' style='left:271.5px;top:486.87px;width:79px'><div style='position:absolute;right:0.6px;top:0;white-space:pre;transform:scaleX(0.939);transform-origin:100% 0'>10000557133</div></div><div class='c' style='left:351.5px;top:486.87px;width:121.5px'><div style='position:absolute;left:1.4px;top:0;white-space:pre;transform:scaleX(0.900);transform-origin:0 0'>id DP L1 DO NOT CHANGE</div></div><div class='c' style='left:474.0px;top:486.87px;width:121.0px'><div style='position:absolute;left:1.4px;top:0;white-space:pre;transform:scaleX(0.892);transform-origin:0 0'>DP L2 DO NOT CHANGE</div></div><div class='c' style='left:596.0px;top:486.87px;width:122.5px'><div style='position:absolute;left:1.4px;top:0;white-space:pre;transform:scaleX(1.001);transform-origin:0 0'>Digital Products</div></div><div class='c' style='left:719.5px;top:486.87px;width:62.5px'><div style='position:absolute;right:0.6px;top:0;white-space:pre;transform:scaleX(0.939);transform-origin:100% 0'>1</div></div><div class='c' style='left:783.0px;top:486.87px;width:35.5px'><div style='position:absolute;left:1.2px;top:0;white-space:pre;transform:scaleX(0.939);transform-origin:0 0'>1300</div></div><div class='tri' style='left:783.0px;top:487.37px'></div><div class='c' style='left:819.5px;top:486.87px;width:131.5px'><div style='position:absolute;left:1.2px;top:0;white-space:pre;transform:scaleX(0.939);transform-origin:0 0'>1000</div></div><div class='tri' style='left:819.5px;top:487.37px'></div><div class='c' style='left:952.0px;top:486.87px;width:81.5px'><div style='position:absolute;left:1.2px;top:0;white-space:pre;transform:scaleX(0.939);transform-origin:0 0'>500</div></div><div class='tri' style='left:952.0px;top:487.37px'></div><div class='c' style='left:1034.5px;top:486.87px;width:63px'><div style='position:absolute;left:1.2px;top:0;white-space:pre;transform:scaleX(0.939);transform-origin:0 0'>500</div></div><div class='tri' style='left:1034.5px;top:487.37px'></div><div class='c' style='left:1098.5px;top:486.87px;width:96.5px'><div style='position:absolute;left:1.2px;top:0;white-space:pre;transform:scaleX(0.939);transform-origin:0 0'>1000</div></div><div class='tri' style='left:1098.5px;top:487.37px'></div><div class='c' style='left:1196.0px;top:486.87px;width:101.5px'><div style='position:absolute;left:1.2px;top:0;white-space:pre;transform:scaleX(0.939);transform-origin:0 0'>1000</div></div><div class='tri' style='left:1196.0px;top:487.37px'></div><div class='c' style='left:21.5px;top:505.66px;width:87px'><div style='position:absolute;left:3.0px;top:0;white-space:pre;transform:scaleX(0.983);transform-origin:0 0'>Belum Ada Pembeli</div></div><div class='c' style='left:109.5px;top:505.66px;width:80px'><div style='position:absolute;right:0.6px;top:0;white-space:pre;transform:scaleX(0.939);transform-origin:100% 0'>101067134</div></div><div class='c' style='left:190.5px;top:505.66px;width:80px'><div style='position:absolute;left:1.4px;top:0;white-space:pre;transform:scaleX(1.016);transform-origin:0 0'>color0,color1</div></div><div class='c' style='left:271.5px;top:505.66px;width:79px'><div style='position:absolute;right:0.6px;top:0;white-space:pre;transform:scaleX(0.939);transform-origin:100% 0'>10000557134</div></div><div class='c' style='left:351.5px;top:505.66px;width:121.5px'><div style='position:absolute;left:1.4px;top:0;white-space:pre;transform:scaleX(0.900);transform-origin:0 0'>id DP L1 DO NOT CHANGE</div></div><div class='c' style='left:474.0px;top:505.66px;width:121.0px'><div style='position:absolute;left:1.4px;top:0;white-space:pre;transform:scaleX(0.892);transform-origin:0 0'>DP L2 DO NOT CHANGE</div></div><div class='c' style='left:596.0px;top:505.66px;width:122.5px'><div style='position:absolute;left:1.4px;top:0;white-space:pre;transform:scaleX(1.001);transform-origin:0 0'>Digital Products</div></div><div class='c' style='left:719.5px;top:505.66px;width:62.5px'><div style='position:absolute;right:0.6px;top:0;white-space:pre;transform:scaleX(0.939);transform-origin:100% 0'>1</div></div><div class='c' style='left:783.0px;top:505.66px;width:35.5px'><div style='position:absolute;left:1.2px;top:0;white-space:pre;transform:scaleX(0.939);transform-origin:0 0'>1300</div></div><div class='tri' style='left:783.0px;top:506.16px'></div><div class='c' style='left:819.5px;top:505.66px;width:131.5px'><div style='position:absolute;left:1.2px;top:0;white-space:pre;transform:scaleX(0.939);transform-origin:0 0'>1000</div></div><div class='tri' style='left:819.5px;top:506.16px'></div><div class='c' style='left:952.0px;top:505.66px;width:81.5px'><div style='position:absolute;left:1.2px;top:0;white-space:pre;transform:scaleX(0.939);transform-origin:0 0'>500</div></div><div class='tri' style='left:952.0px;top:506.16px'></div><div class='c' style='left:1034.5px;top:505.66px;width:63px'><div style='position:absolute;left:1.2px;top:0;white-space:pre;transform:scaleX(0.939);transform-origin:0 0'>500</div></div><div class='tri' style='left:1034.5px;top:506.16px'></div><div class='c' style='left:1098.5px;top:505.66px;width:96.5px'><div style='position:absolute;left:1.2px;top:0;white-space:pre;transform:scaleX(0.939);transform-origin:0 0'>1000</div></div><div class='tri' style='left:1098.5px;top:506.16px'></div><div class='c' style='left:1196.0px;top:505.66px;width:101.5px'><div style='position:absolute;left:1.2px;top:0;white-space:pre;transform:scaleX(0.939);transform-origin:0 0'>1000</div></div><div class='tri' style='left:1196.0px;top:506.16px'></div><div class='c' style='left:21.5px;top:524.45px;width:87px'><div style='position:absolute;left:3.0px;top:0;white-space:pre;transform:scaleX(1.020);transform-origin:0 0'>Rabbit Wooden</div></div><div class='c' style='left:109.5px;top:524.45px;width:80px'><div style='position:absolute;right:0.6px;top:0;white-space:pre;transform:scaleX(0.939);transform-origin:100% 0'>1592203</div></div><div class='c' style='left:271.5px;top:524.45px;width:79px'><div style='position:absolute;right:0.6px;top:0;white-space:pre;transform:scaleX(0.939);transform-origin:100% 0'>5445948</div></div><div class='c' style='left:351.5px;top:524.45px;width:121.5px'><div style='position:absolute;left:1.4px;top:0;white-space:pre;transform:scaleX(1.017);transform-origin:0 0'>Baju Wanita</div></div><div class='c' style='left:474.0px;top:524.45px;width:121.0px'><div style='position:absolute;left:1.4px;top:0;white-space:pre;transform:scaleX(0.982);transform-origin:0 0'>Atasan</div></div><div class='c' style='left:596.0px;top:524.45px;width:122.5px'><div style='position:absolute;left:1.4px;top:0;white-space:pre;transform:scaleX(0.949);transform-origin:0 0'>Kaos</div></div><div class='c' style='left:719.5px;top:524.45px;width:62.5px'><div style='position:absolute;right:0.6px;top:0;white-space:pre;transform:scaleX(0.939);transform-origin:100% 0'>2</div></div><div class='c' style='left:783.0px;top:524.45px;width:35.5px'><div style='position:absolute;left:1.2px;top:0;white-space:pre;transform:scaleX(0.939);transform-origin:0 0'>19500</div></div><div class='tri' style='left:783.0px;top:524.95px'></div><div class='c' style='left:819.5px;top:524.45px;width:131.5px'><div style='position:absolute;left:1.2px;top:0;white-space:pre;transform:scaleX(0.939);transform-origin:0 0'>150000</div></div><div class='tri' style='left:819.5px;top:524.95px'></div><div class='c' style='left:952.0px;top:524.45px;width:81.5px'><div style='position:absolute;left:1.2px;top:0;white-space:pre;transform:scaleX(0.939);transform-origin:0 0'>75000</div></div><div class='tri' style='left:952.0px;top:524.95px'></div><div class='c' style='left:1034.5px;top:524.45px;width:63px'><div style='position:absolute;left:1.2px;top:0;white-space:pre;transform:scaleX(0.939);transform-origin:0 0'>75000</div></div><div class='tri' style='left:1034.5px;top:524.95px'></div><div class='c' style='left:1098.5px;top:524.45px;width:96.5px'><div style='position:absolute;left:1.2px;top:0;white-space:pre;transform:scaleX(0.939);transform-origin:0 0'>150000</div></div><div class='tri' style='left:1098.5px;top:524.95px'></div><div class='c' style='left:1196.0px;top:524.45px;width:101.5px'><div style='position:absolute;left:1.2px;top:0;white-space:pre;transform:scaleX(0.939);transform-origin:0 0'>150000</div></div><div class='tri' style='left:1196.0px;top:524.95px'></div><div class='c' style='left:21.5px;top:543.24px;width:87px'><div style='position:absolute;left:3.0px;top:0;white-space:pre;transform:scaleX(0.972);transform-origin:0 0'>Sedotan Stainless</div></div><div class='c' style='left:109.5px;top:543.24px;width:80px'><div style='position:absolute;right:0.6px;top:0;white-space:pre;transform:scaleX(0.939);transform-origin:100% 0'>100091090</div></div><div class='c' style='left:271.5px;top:543.24px;width:79px'><div style='position:absolute;right:0.6px;top:0;white-space:pre;transform:scaleX(0.939);transform-origin:100% 0'>5447746</div></div><div class='c' style='left:351.5px;top:543.24px;width:121.5px'><div style='position:absolute;left:1.4px;top:0;white-space:pre;transform:scaleX(1.017);transform-origin:0 0'>Baju Wanita</div></div><div class='c' style='left:474.0px;top:543.24px;width:121.0px'><div style='position:absolute;left:1.4px;top:0;white-space:pre;transform:scaleX(0.982);transform-origin:0 0'>Atasan</div></div><div class='c' style='left:596.0px;top:543.24px;width:122.5px'><div style='position:absolute;left:1.4px;top:0;white-space:pre;transform:scaleX(0.949);transform-origin:0 0'>Kaos</div></div><div class='c' style='left:719.5px;top:543.24px;width:62.5px'><div style='position:absolute;right:0.6px;top:0;white-space:pre;transform:scaleX(0.939);transform-origin:100% 0'>0</div></div><div class='c' style='left:783.0px;top:543.24px;width:35.5px'><div style='position:absolute;left:1.2px;top:0;white-space:pre;transform:scaleX(0.939);transform-origin:0 0'>26000</div></div><div class='tri' style='left:783.0px;top:543.74px'></div><div class='c' style='left:819.5px;top:543.24px;width:131.5px'><div style='position:absolute;left:1.2px;top:0;white-space:pre;transform:scaleX(0.939);transform-origin:0 0'>20000</div></div><div class='tri' style='left:819.5px;top:543.74px'></div><div class='c' style='left:952.0px;top:543.24px;width:81.5px'><div style='position:absolute;left:1.2px;top:0;white-space:pre;transform:scaleX(0.939);transform-origin:0 0'>10000</div></div><div class='tri' style='left:952.0px;top:543.74px'></div><div class='c' style='left:1034.5px;top:543.24px;width:63px'><div style='position:absolute;left:1.2px;top:0;white-space:pre;transform:scaleX(0.939);transform-origin:0 0'>10000</div></div><div class='tri' style='left:1034.5px;top:543.74px'></div><div class='c' style='left:1098.5px;top:543.24px;width:96.5px'><div style='position:absolute;left:1.2px;top:0;white-space:pre;transform:scaleX(0.939);transform-origin:0 0'>20000</div></div><div class='tri' style='left:1098.5px;top:543.74px'></div><div class='c' style='left:1196.0px;top:543.24px;width:101.5px'><div style='position:absolute;left:1.2px;top:0;white-space:pre;transform:scaleX(0.939);transform-origin:0 0'>20000</div></div><div class='tri' style='left:1196.0px;top:543.74px'></div><div class='c' style='left:21.5px;top:562.03px;width:87px'><div style='position:absolute;left:3.0px;top:0;white-space:pre;transform:scaleX(0.991);transform-origin:0 0'>Bed Frame with</div></div><div class='c' style='left:109.5px;top:562.03px;width:80px'><div style='position:absolute;right:0.6px;top:0;white-space:pre;transform:scaleX(0.939);transform-origin:100% 0'>100832153</div></div><div class='c' style='left:190.5px;top:562.03px;width:80px'><div style='position:absolute;left:1.4px;top:0;white-space:pre;transform:scaleX(0.994);transform-origin:0 0'>Queen</div></div><div class='c' style='left:271.5px;top:562.03px;width:79px'><div style='position:absolute;right:0.6px;top:0;white-space:pre;transform:scaleX(0.939);transform-origin:100% 0'>10000093674</div></div><div class='c' style='left:351.5px;top:562.03px;width:121.5px'><div style='position:absolute;left:1.4px;top:0;white-space:pre;transform:scaleX(1.017);transform-origin:0 0'>Baju Wanita</div></div><div class='c' style='left:474.0px;top:562.03px;width:121.0px'><div style='position:absolute;left:1.4px;top:0;white-space:pre;transform:scaleX(0.982);transform-origin:0 0'>Atasan</div></div><div class='c' style='left:596.0px;top:562.03px;width:122.5px'><div style='position:absolute;left:1.4px;top:0;white-space:pre;transform:scaleX(0.949);transform-origin:0 0'>Kaos</div></div><div class='c' style='left:719.5px;top:562.03px;width:62.5px'><div style='position:absolute;right:0.6px;top:0;white-space:pre;transform:scaleX(0.939);transform-origin:100% 0'>0</div></div><div class='c' style='left:783.0px;top:562.03px;width:35.5px'><div style='position:absolute;left:1.2px;top:0;white-space:pre;transform:scaleX(0.939);transform-origin:0 0'>24160</div></div><div class='tri' style='left:783.0px;top:562.53px'></div><div class='c' style='left:819.5px;top:562.03px;width:131.5px'><div style='position:absolute;left:1.2px;top:0;white-space:pre;transform:scaleX(0.939);transform-origin:0 0'>1858500</div></div><div class='tri' style='left:819.5px;top:562.53px'></div><div class='c' style='left:952.0px;top:562.03px;width:81.5px'><div style='position:absolute;left:1.2px;top:0;white-space:pre;transform:scaleX(0.939);transform-origin:0 0'>929250</div></div><div class='tri' style='left:952.0px;top:562.53px'></div><div class='c' style='left:1034.5px;top:562.03px;width:63px'><div style='position:absolute;left:1.2px;top:0;white-space:pre;transform:scaleX(0.939);transform-origin:0 0'>929250</div></div><div class='tri' style='left:1034.5px;top:562.53px'></div><div class='c' style='left:1098.5px;top:562.03px;width:96.5px'><div style='position:absolute;left:1.2px;top:0;white-space:pre;transform:scaleX(0.939);transform-origin:0 0'>1858500</div></div><div class='tri' style='left:1098.5px;top:562.53px'></div><div class='c' style='left:1196.0px;top:562.03px;width:101.5px'><div style='position:absolute;left:1.2px;top:0;white-space:pre;transform:scaleX(0.939);transform-origin:0 0'>1858500</div></div><div class='tri' style='left:1196.0px;top:562.53px'></div><div class='c' style='left:21.5px;top:580.82px;width:87px'><div style='position:absolute;left:3.0px;top:0;white-space:pre;transform:scaleX(0.991);transform-origin:0 0'>Bed Frame with</div></div><div class='c' style='left:109.5px;top:580.82px;width:80px'><div style='position:absolute;right:0.6px;top:0;white-space:pre;transform:scaleX(0.939);transform-origin:100% 0'>100832153</div></div><div class='c' style='left:190.5px;top:580.82px;width:80px'><div style='position:absolute;left:1.4px;top:0;white-space:pre;transform:scaleX(0.939);transform-origin:0 0'>Single</div></div><div class='c' style='left:271.5px;top:580.82px;width:79px'><div style='position:absolute;right:0.6px;top:0;white-space:pre;transform:scaleX(0.939);transform-origin:100% 0'>10000093673</div></div><div class='c' style='left:351.5px;top:580.82px;width:121.5px'><div style='position:absolute;left:1.4px;top:0;white-space:pre;transform:scaleX(1.017);transform-origin:0 0'>Baju Wanita</div></div><div class='c' style='left:474.0px;top:580.82px;width:121.0px'><div style='position:absolute;left:1.4px;top:0;white-space:pre;transform:scaleX(0.982);transform-origin:0 0'>Atasan</div></div><div class='c' style='left:596.0px;top:580.82px;width:122.5px'><div style='position:absolute;left:1.4px;top:0;white-space:pre;transform:scaleX(0.949);transform-origin:0 0'>Kaos</div></div><div class='c' style='left:719.5px;top:580.82px;width:62.5px'><div style='position:absolute;right:0.6px;top:0;white-space:pre;transform:scaleX(0.939);transform-origin:100% 0'>0</div></div><div class='c' style='left:783.0px;top:580.82px;width:35.5px'><div style='position:absolute;left:1.2px;top:0;white-space:pre;transform:scaleX(0.939);transform-origin:0 0'>17623</div></div><div class='tri' style='left:783.0px;top:581.32px'></div><div class='c' style='left:819.5px;top:580.82px;width:131.5px'><div style='position:absolute;left:1.2px;top:0;white-space:pre;transform:scaleX(0.939);transform-origin:0 0'>1355650</div></div><div class='tri' style='left:819.5px;top:581.32px'></div><div class='c' style='left:952.0px;top:580.82px;width:81.5px'><div style='position:absolute;left:1.2px;top:0;white-space:pre;transform:scaleX(0.939);transform-origin:0 0'>677825</div></div><div class='tri' style='left:952.0px;top:581.32px'></div><div class='c' style='left:1034.5px;top:580.82px;width:63px'><div style='position:absolute;left:1.2px;top:0;white-space:pre;transform:scaleX(0.939);transform-origin:0 0'>677825</div></div><div class='tri' style='left:1034.5px;top:581.32px'></div><div class='c' style='left:1098.5px;top:580.82px;width:96.5px'><div style='position:absolute;left:1.2px;top:0;white-space:pre;transform:scaleX(0.939);transform-origin:0 0'>1355650</div></div><div class='tri' style='left:1098.5px;top:581.32px'></div><div class='c' style='left:1196.0px;top:580.82px;width:101.5px'><div style='position:absolute;left:1.2px;top:0;white-space:pre;transform:scaleX(0.939);transform-origin:0 0'>1355650</div></div><div class='tri' style='left:1196.0px;top:581.32px'></div><div class='c' style='left:21.5px;top:599.61px;width:87px'><div style='position:absolute;left:3.0px;top:0;white-space:pre;transform:scaleX(0.991);transform-origin:0 0'>Bed Frame with</div></div><div class='c' style='left:109.5px;top:599.61px;width:80px'><div style='position:absolute;right:0.6px;top:0;white-space:pre;transform:scaleX(0.939);transform-origin:100% 0'>100832153</div></div><div class='c' style='left:190.5px;top:599.61px;width:80px'><div style='position:absolute;left:1.4px;top:0;white-space:pre;transform:scaleX(0.969);transform-origin:0 0'>King</div></div><div class='c' style='left:271.5px;top:599.61px;width:79px'><div style='position:absolute;right:0.6px;top:0;white-space:pre;transform:scaleX(0.939);transform-origin:100% 0'>10000093675</div></div><div class='c' style='left:351.5px;top:599.61px;width:121.5px'><div style='position:absolute;left:1.4px;top:0;white-space:pre;transform:scaleX(1.017);transform-origin:0 0'>Baju Wanita</div></div><div class='c' style='left:474.0px;top:599.61px;width:121.0px'><div style='position:absolute;left:1.4px;top:0;white-space:pre;transform:scaleX(0.982);transform-origin:0 0'>Atasan</div></div><div class='c' style='left:596.0px;top:599.61px;width:122.5px'><div style='position:absolute;left:1.4px;top:0;white-space:pre;transform:scaleX(0.949);transform-origin:0 0'>Kaos</div></div><div class='c' style='left:719.5px;top:599.61px;width:62.5px'><div style='position:absolute;right:0.6px;top:0;white-space:pre;transform:scaleX(0.939);transform-origin:100% 0'>0</div></div><div class='c' style='left:783.0px;top:599.61px;width:35.5px'><div style='position:absolute;left:1.2px;top:0;white-space:pre;transform:scaleX(0.939);transform-origin:0 0'>27443</div></div><div class='tri' style='left:783.0px;top:600.11px'></div><div class='c' style='left:819.5px;top:599.61px;width:131.5px'><div style='position:absolute;left:1.2px;top:0;white-space:pre;transform:scaleX(0.976);transform-origin:0 0'>2111050</div></div><div class='tri' style='left:819.5px;top:600.11px'></div><div class='c' style='left:952.0px;top:599.61px;width:81.5px'><div style='position:absolute;left:1.2px;top:0;white-space:pre;transform:scaleX(0.939);transform-origin:0 0'>1055525</div></div><div class='tri' style='left:952.0px;top:600.11px'></div><div class='c' style='left:1034.5px;top:599.61px;width:63px'><div style='position:absolute;left:1.2px;top:0;white-space:pre;transform:scaleX(0.939);transform-origin:0 0'>1055525</div></div><div class='tri' style='left:1034.5px;top:600.11px'></div><div class='c' style='left:1098.5px;top:599.61px;width:96.5px'><div style='position:absolute;left:1.2px;top:0;white-space:pre;transform:scaleX(0.976);transform-origin:0 0'>2111050</div></div><div class='tri' style='left:1098.5px;top:600.11px'></div><div class='c' style='left:1196.0px;top:599.61px;width:101.5px'><div style='position:absolute;left:1.2px;top:0;white-space:pre;transform:scaleX(0.976);transform-origin:0 0'>2111050</div></div><div class='tri' style='left:1196.0px;top:600.11px'></div><div class='c' style='left:21.5px;top:618.40px;width:87px'><div style='position:absolute;left:3.0px;top:0;white-space:pre;transform:scaleX(1.023);transform-origin:0 0'>hahahaha nyyt</div></div><div class='c' style='left:109.5px;top:618.40px;width:80px'><div style='position:absolute;right:0.6px;top:0;white-space:pre;transform:scaleX(0.968);transform-origin:100% 0'>800091116</div></div><div class='c' style='left:190.5px;top:618.40px;width:80px'><div style='position:absolute;left:1.4px;top:0;white-space:pre;transform:scaleX(1.016);transform-origin:0 0'>color0,color0</div></div><div class='c' style='left:271.5px;top:618.40px;width:79px'><div style='position:absolute;right:0.6px;top:0;white-space:pre;transform:scaleX(0.939);transform-origin:100% 0'>10003704078</div></div><div class='c' style='left:351.5px;top:618.40px;width:121.5px'><div style='position:absolute;left:1.4px;top:0;white-space:pre;transform:scaleX(0.986);transform-origin:0 0'>rachel_set_seller_category</div></div><div class='c' style='left:474.0px;top:618.40px;width:121.0px'><div style='position:absolute;left:1.4px;top:0;white-space:pre;transform:scaleX(0.973);transform-origin:0 0'>rachel set category_L2</div></div><div class='c' style='left:596.0px;top:618.40px;width:122.5px'><div style='position:absolute;left:1.4px;top:0;white-space:pre;transform:scaleX(0.973);transform-origin:0 0'>rachel set category_L3</div></div><div class='c' style='left:719.5px;top:618.40px;width:62.5px'><div style='position:absolute;right:0.6px;top:0;white-space:pre;transform:scaleX(0.939);transform-origin:100% 0'>0</div></div><div class='c' style='left:783.0px;top:618.40px;width:35.5px'><div style='position:absolute;left:1.2px;top:0;white-space:pre;transform:scaleX(0.939);transform-origin:0 0'>1000</div></div><div class='tri' style='left:783.0px;top:618.90px'></div><div class='c' style='left:819.5px;top:618.40px;width:131.5px'><div style='position:absolute;left:1.2px;top:0;white-space:pre;transform:scaleX(0.939);transform-origin:0 0'>1000</div></div><div class='tri' style='left:819.5px;top:618.90px'></div><div class='c' style='left:952.0px;top:618.40px;width:81.5px'><div style='position:absolute;left:1.2px;top:0;white-space:pre;transform:scaleX(0.939);transform-origin:0 0'>500</div></div><div class='tri' style='left:952.0px;top:618.90px'></div><div class='c' style='left:1034.5px;top:618.40px;width:63px'><div style='position:absolute;left:1.2px;top:0;white-space:pre;transform:scaleX(0.939);transform-origin:0 0'>500</div></div><div class='tri' style='left:1034.5px;top:618.90px'></div><div class='c' style='left:1098.5px;top:618.40px;width:96.5px'><div style='position:absolute;left:1.2px;top:0;white-space:pre;transform:scaleX(0.939);transform-origin:0 0'>1000</div></div><div class='tri' style='left:1098.5px;top:618.90px'></div><div class='c' style='left:1196.0px;top:618.40px;width:101.5px'><div style='position:absolute;left:1.2px;top:0;white-space:pre;transform:scaleX(0.939);transform-origin:0 0'>1000</div></div><div class='tri' style='left:1196.0px;top:618.90px'></div><div class='c' style='left:21.5px;top:637.19px;width:87px'><div style='position:absolute;left:3.0px;top:0;white-space:pre;transform:scaleX(1.023);transform-origin:0 0'>hahahaha nyyt</div></div><div class='c' style='left:109.5px;top:637.19px;width:80px'><div style='position:absolute;right:0.6px;top:0;white-space:pre;transform:scaleX(0.968);transform-origin:100% 0'>800091116</div></div><div class='c' style='left:190.5px;top:637.19px;width:80px'><div style='position:absolute;left:1.4px;top:0;white-space:pre;transform:scaleX(1.016);transform-origin:0 0'>color0,color1</div></div><div class='c' style='left:271.5px;top:637.19px;width:79px'><div style='position:absolute;right:0.6px;top:0;white-space:pre;transform:scaleX(0.939);transform-origin:100% 0'>10003704079</div></div><div class='c' style='left:351.5px;top:637.19px;width:121.5px'><div style='position:absolute;left:1.4px;top:0;white-space:pre;transform:scaleX(0.986);transform-origin:0 0'>rachel_set_seller_category</div></div><div class='c' style='left:474.0px;top:637.19px;width:121.0px'><div style='position:absolute;left:1.4px;top:0;white-space:pre;transform:scaleX(0.973);transform-origin:0 0'>rachel set category_L2</div></div><div class='c' style='left:596.0px;top:637.19px;width:122.5px'><div style='position:absolute;left:1.4px;top:0;white-space:pre;transform:scaleX(0.973);transform-origin:0 0'>rachel set category_L3</div></div><div class='c' style='left:719.5px;top:637.19px;width:62.5px'><div style='position:absolute;right:0.6px;top:0;white-space:pre;transform:scaleX(0.939);transform-origin:100% 0'>0</div></div><div class='c' style='left:783.0px;top:637.19px;width:35.5px'><div style='position:absolute;left:1.2px;top:0;white-space:pre;transform:scaleX(0.939);transform-origin:0 0'>1000</div></div><div class='tri' style='left:783.0px;top:637.69px'></div><div class='c' style='left:819.5px;top:637.19px;width:131.5px'><div style='position:absolute;left:1.2px;top:0;white-space:pre;transform:scaleX(0.939);transform-origin:0 0'>1000</div></div><div class='tri' style='left:819.5px;top:637.69px'></div><div class='c' style='left:952.0px;top:637.19px;width:81.5px'><div style='position:absolute;left:1.2px;top:0;white-space:pre;transform:scaleX(0.939);transform-origin:0 0'>500</div></div><div class='tri' style='left:952.0px;top:637.69px'></div><div class='c' style='left:1034.5px;top:637.19px;width:63px'><div style='position:absolute;left:1.2px;top:0;white-space:pre;transform:scaleX(0.939);transform-origin:0 0'>500</div></div><div class='tri' style='left:1034.5px;top:637.69px'></div><div class='c' style='left:1098.5px;top:637.19px;width:96.5px'><div style='position:absolute;left:1.2px;top:0;white-space:pre;transform:scaleX(0.939);transform-origin:0 0'>1000</div></div><div class='tri' style='left:1098.5px;top:637.69px'></div><div class='c' style='left:1196.0px;top:637.19px;width:101.5px'><div style='position:absolute;left:1.2px;top:0;white-space:pre;transform:scaleX(0.939);transform-origin:0 0'>1000</div></div><div class='tri' style='left:1196.0px;top:637.69px'></div><div class='c' style='left:21.5px;top:655.98px;width:87px'><div style='position:absolute;left:3.0px;top:0;white-space:pre;transform:scaleX(0.975);transform-origin:0 0'>Pre Order Colgate</div></div><div class='c' style='left:109.5px;top:655.98px;width:80px'><div style='position:absolute;right:0.6px;top:0;white-space:pre;transform:scaleX(0.939);transform-origin:100% 0'>100069320</div></div><div class='c' style='left:271.5px;top:655.98px;width:79px'><div style='position:absolute;right:0.6px;top:0;white-space:pre;transform:scaleX(0.939);transform-origin:100% 0'>5446425</div></div><div class='c' style='left:351.5px;top:655.98px;width:121.5px'><div style='position:absolute;left:1.4px;top:0;white-space:pre;transform:scaleX(1.017);transform-origin:0 0'>Baju Wanita</div></div><div class='c' style='left:474.0px;top:655.98px;width:121.0px'><div style='position:absolute;left:1.4px;top:0;white-space:pre;transform:scaleX(0.982);transform-origin:0 0'>Atasan</div></div><div class='c' style='left:596.0px;top:655.98px;width:122.5px'><div style='position:absolute;left:1.4px;top:0;white-space:pre;transform:scaleX(0.949);transform-origin:0 0'>Kaos</div></div><div class='c' style='left:719.5px;top:655.98px;width:62.5px'><div style='position:absolute;right:0.6px;top:0;white-space:pre;transform:scaleX(0.939);transform-origin:100% 0'>0</div></div><div class='c' style='left:783.0px;top:655.98px;width:35.5px'><div style='position:absolute;left:1.2px;top:0;white-space:pre;transform:scaleX(0.939);transform-origin:0 0'>13000</div></div><div class='tri' style='left:783.0px;top:656.48px'></div><div class='c' style='left:819.5px;top:655.98px;width:131.5px'><div style='position:absolute;left:1.2px;top:0;white-space:pre;transform:scaleX(0.939);transform-origin:0 0'>10000</div></div><div class='tri' style='left:819.5px;top:656.48px'></div><div class='c' style='left:952.0px;top:655.98px;width:81.5px'><div style='position:absolute;left:1.2px;top:0;white-space:pre;transform:scaleX(0.939);transform-origin:0 0'>5000</div></div><div class='tri' style='left:952.0px;top:656.48px'></div><div class='c' style='left:1034.5px;top:655.98px;width:63px'><div style='position:absolute;left:1.2px;top:0;white-space:pre;transform:scaleX(0.939);transform-origin:0 0'>5000</div></div><div class='tri' style='left:1034.5px;top:656.48px'></div><div class='c' style='left:1098.5px;top:655.98px;width:96.5px'><div style='position:absolute;left:1.2px;top:0;white-space:pre;transform:scaleX(0.939);transform-origin:0 0'>10000</div></div><div class='tri' style='left:1098.5px;top:656.48px'></div><div class='c' style='left:1196.0px;top:655.98px;width:101.5px'><div style='position:absolute;left:1.2px;top:0;white-space:pre;transform:scaleX(0.939);transform-origin:0 0'>10000</div></div><div class='tri' style='left:1196.0px;top:656.48px'></div><div class='c' style='left:21.5px;top:674.77px;width:87px'><div style='position:absolute;left:3.0px;top:0;white-space:pre;transform:scaleX(0.999);transform-origin:0 0'>Kipas Angin Mini</div></div><div class='c' style='left:109.5px;top:674.77px;width:80px'><div style='position:absolute;right:0.6px;top:0;white-space:pre;transform:scaleX(0.939);transform-origin:100% 0'>1538125</div></div><div class='c' style='left:271.5px;top:674.77px;width:79px'><div style='position:absolute;right:0.6px;top:0;white-space:pre;transform:scaleX(0.939);transform-origin:100% 0'>5443532</div></div><div class='c' style='left:351.5px;top:674.77px;width:121.5px'><div style='position:absolute;left:1.4px;top:0;white-space:pre;transform:scaleX(1.017);transform-origin:0 0'>Baju Wanita</div></div><div class='c' style='left:474.0px;top:674.77px;width:121.0px'><div style='position:absolute;left:1.4px;top:0;white-space:pre;transform:scaleX(0.982);transform-origin:0 0'>Atasan</div></div><div class='c' style='left:596.0px;top:674.77px;width:122.5px'><div style='position:absolute;left:1.4px;top:0;white-space:pre;transform:scaleX(0.949);transform-origin:0 0'>Kaos</div></div><div class='c' style='left:719.5px;top:674.77px;width:62.5px'><div style='position:absolute;right:0.6px;top:0;white-space:pre;transform:scaleX(1.006);transform-origin:100% 0'>11</div></div><div class='c' style='left:783.0px;top:674.77px;width:35.5px'><div style='position:absolute;left:1.2px;top:0;white-space:pre;transform:scaleX(0.939);transform-origin:0 0'>32760</div></div><div class='tri' style='left:783.0px;top:675.27px'></div><div class='c' style='left:819.5px;top:674.77px;width:131.5px'><div style='position:absolute;left:1.2px;top:0;white-space:pre;transform:scaleX(0.939);transform-origin:0 0'>252000</div></div><div class='tri' style='left:819.5px;top:675.27px'></div><div class='c' style='left:952.0px;top:674.77px;width:81.5px'><div style='position:absolute;left:1.2px;top:0;white-space:pre;transform:scaleX(0.939);transform-origin:0 0'>126000</div></div><div class='tri' style='left:952.0px;top:675.27px'></div><div class='c' style='left:1034.5px;top:674.77px;width:63px'><div style='position:absolute;left:1.2px;top:0;white-space:pre;transform:scaleX(0.939);transform-origin:0 0'>126000</div></div><div class='tri' style='left:1034.5px;top:675.27px'></div><div class='c' style='left:1098.5px;top:674.77px;width:96.5px'><div style='position:absolute;left:1.2px;top:0;white-space:pre;transform:scaleX(0.939);transform-origin:0 0'>252000</div></div><div class='tri' style='left:1098.5px;top:675.27px'></div><div class='c' style='left:1196.0px;top:674.77px;width:101.5px'><div style='position:absolute;left:1.2px;top:0;white-space:pre;transform:scaleX(0.939);transform-origin:0 0'>252000</div></div><div class='tri' style='left:1196.0px;top:675.27px'></div><div class='c' style='left:21.5px;top:693.56px;width:87px'><div style='position:absolute;left:3.0px;top:0;white-space:pre;transform:scaleX(0.969);transform-origin:0 0'>PFF wakwawww</div></div><div class='c' style='left:109.5px;top:693.56px;width:80px'><div style='position:absolute;right:0.6px;top:0;white-space:pre;transform:scaleX(0.939);transform-origin:100% 0'>100762903</div></div><div class='c' style='left:271.5px;top:693.56px;width:79px'><div style='position:absolute;right:0.6px;top:0;white-space:pre;transform:scaleX(0.939);transform-origin:100% 0'>5004474</div></div><div class='c' style='left:351.5px;top:693.56px;width:121.5px'><div style='position:absolute;left:1.4px;top:0;white-space:pre;transform:scaleX(1.017);transform-origin:0 0'>Baju Wanita</div></div><div class='c' style='left:474.0px;top:693.56px;width:121.0px'><div style='position:absolute;left:1.4px;top:0;white-space:pre;transform:scaleX(0.982);transform-origin:0 0'>Atasan</div></div><div class='c' style='left:596.0px;top:693.56px;width:122.5px'><div style='position:absolute;left:1.4px;top:0;white-space:pre;transform:scaleX(0.949);transform-origin:0 0'>Kaos</div></div><div class='c' style='left:719.5px;top:693.56px;width:62.5px'><div style='position:absolute;right:0.6px;top:0;white-space:pre;transform:scaleX(0.939);transform-origin:100% 0'>1</div></div><div class='c' style='left:783.0px;top:693.56px;width:35.5px'><div style='position:absolute;left:1.2px;top:0;white-space:pre;transform:scaleX(0.939);transform-origin:0 0'>13000</div></div><div class='tri' style='left:783.0px;top:694.06px'></div><div class='c' style='left:819.5px;top:693.56px;width:131.5px'><div style='position:absolute;left:1.2px;top:0;white-space:pre;transform:scaleX(0.939);transform-origin:0 0'>10000</div></div><div class='tri' style='left:819.5px;top:694.06px'></div><div class='c' style='left:952.0px;top:693.56px;width:81.5px'><div style='position:absolute;left:1.2px;top:0;white-space:pre;transform:scaleX(0.939);transform-origin:0 0'>5000</div></div><div class='tri' style='left:952.0px;top:694.06px'></div><div class='c' style='left:1034.5px;top:693.56px;width:63px'><div style='position:absolute;left:1.2px;top:0;white-space:pre;transform:scaleX(0.939);transform-origin:0 0'>5000</div></div><div class='tri' style='left:1034.5px;top:694.06px'></div><div class='c' style='left:1098.5px;top:693.56px;width:96.5px'><div style='position:absolute;left:1.2px;top:0;white-space:pre;transform:scaleX(0.939);transform-origin:0 0'>10000</div></div><div class='tri' style='left:1098.5px;top:694.06px'></div><div class='c' style='left:1196.0px;top:693.56px;width:101.5px'><div style='position:absolute;left:1.2px;top:0;white-space:pre;transform:scaleX(0.939);transform-origin:0 0'>10000</div></div><div class='tri' style='left:1196.0px;top:694.06px'></div><div class='c' style='left:21.5px;top:712.35px;width:87px'><div style='position:absolute;left:3.0px;top:0;white-space:pre;transform:scaleX(0.990);transform-origin:0 0'>Penghapus Karakter</div></div><div class='c' style='left:109.5px;top:712.35px;width:80px'><div style='position:absolute;right:0.6px;top:0;white-space:pre;transform:scaleX(0.939);transform-origin:100% 0'>100836388</div></div><div class='c' style='left:271.5px;top:712.35px;width:79px'><div style='position:absolute;right:0.6px;top:0;white-space:pre;transform:scaleX(0.939);transform-origin:100% 0'>10000098647</div></div><div class='c' style='left:351.5px;top:712.35px;width:121.5px'><div style='position:absolute;left:1.4px;top:0;white-space:pre;transform:scaleX(1.017);transform-origin:0 0'>Baju Wanita</div></div><div class='c' style='left:474.0px;top:712.35px;width:121.0px'><div style='position:absolute;left:1.4px;top:0;white-space:pre;transform:scaleX(0.982);transform-origin:0 0'>Atasan</div></div><div class='c' style='left:596.0px;top:712.35px;width:122.5px'><div style='position:absolute;left:1.4px;top:0;white-space:pre;transform:scaleX(0.949);transform-origin:0 0'>Kaos</div></div><div class='c' style='left:719.5px;top:712.35px;width:62.5px'><div style='position:absolute;right:0.6px;top:0;white-space:pre;transform:scaleX(0.939);transform-origin:100% 0'>0</div></div><div class='c' style='left:783.0px;top:712.35px;width:35.5px'><div style='position:absolute;left:1.2px;top:0;white-space:pre;transform:scaleX(0.939);transform-origin:0 0'>2860</div></div><div class='tri' style='left:783.0px;top:712.85px'></div><div class='c' style='left:819.5px;top:712.35px;width:131.5px'><div style='position:absolute;left:1.2px;top:0;white-space:pre;transform:scaleX(0.939);transform-origin:0 0'>2200</div></div><div class='tri' style='left:819.5px;top:712.85px'></div><div class='c' style='left:952.0px;top:712.35px;width:81.5px'><div style='position:absolute;left:1.2px;top:0;white-space:pre;transform:scaleX(0.971);transform-origin:0 0'>1100</div></div><div class='tri' style='left:952.0px;top:712.85px'></div><div class='c' style='left:1034.5px;top:712.35px;width:63px'><div style='position:absolute;left:1.2px;top:0;white-space:pre;transform:scaleX(0.971);transform-origin:0 0'>1100</div></div><div class='tri' style='left:1034.5px;top:712.85px'></div><div class='c' style='left:1098.5px;top:712.35px;width:96.5px'><div style='position:absolute;left:1.2px;top:0;white-space:pre;transform:scaleX(0.939);transform-origin:0 0'>2200</div></div><div class='tri' style='left:1098.5px;top:712.85px'></div><div class='c' style='left:1196.0px;top:712.35px;width:101.5px'><div style='position:absolute;left:1.2px;top:0;white-space:pre;transform:scaleX(0.939);transform-origin:0 0'>2200</div></div><div class='tri' style='left:1196.0px;top:712.85px'></div><div class='c' style='left:21.5px;top:731.14px;width:87px'><div style='position:absolute;left:3.0px;top:0;white-space:pre;transform:scaleX(0.979);transform-origin:0 0'>Bear Plush Toy</div></div><div class='c' style='left:109.5px;top:731.14px;width:80px'><div style='position:absolute;right:0.6px;top:0;white-space:pre;transform:scaleX(0.939);transform-origin:100% 0'>100950740</div></div><div class='c' style='left:271.5px;top:731.14px;width:79px'><div style='position:absolute;right:0.6px;top:0;white-space:pre;transform:scaleX(0.939);transform-origin:100% 0'>5279145</div></div><div class='c' style='left:351.5px;top:731.14px;width:121.5px'><div style='position:absolute;left:1.4px;top:0;white-space:pre;transform:scaleX(1.017);transform-origin:0 0'>Baju Wanita</div></div><div class='c' style='left:474.0px;top:731.14px;width:121.0px'><div style='position:absolute;left:1.4px;top:0;white-space:pre;transform:scaleX(0.982);transform-origin:0 0'>Atasan</div></div><div class='c' style='left:596.0px;top:731.14px;width:122.5px'><div style='position:absolute;left:1.4px;top:0;white-space:pre;transform:scaleX(0.949);transform-origin:0 0'>Kaos</div></div><div class='c' style='left:719.5px;top:731.14px;width:62.5px'><div style='position:absolute;right:0.6px;top:0;white-space:pre;transform:scaleX(0.939);transform-origin:100% 0'>0</div></div><div class='c' style='left:783.0px;top:731.14px;width:35.5px'><div style='position:absolute;left:1.2px;top:0;white-space:pre;transform:scaleX(0.939);transform-origin:0 0'>14625</div></div><div class='tri' style='left:783.0px;top:731.64px'></div><div class='c' style='left:819.5px;top:731.14px;width:131.5px'><div style='position:absolute;left:1.2px;top:0;white-space:pre;transform:scaleX(0.960);transform-origin:0 0'>112500</div></div><div class='tri' style='left:819.5px;top:731.64px'></div><div class='c' style='left:952.0px;top:731.14px;width:81.5px'><div style='position:absolute;left:1.2px;top:0;white-space:pre;transform:scaleX(0.939);transform-origin:0 0'>56250</div></div><div class='tri' style='left:952.0px;top:731.64px'></div><div class='c' style='left:1034.5px;top:731.14px;width:63px'><div style='position:absolute;left:1.2px;top:0;white-space:pre;transform:scaleX(0.939);transform-origin:0 0'>56250</div></div><div class='tri' style='left:1034.5px;top:731.64px'></div><div class='c' style='left:1098.5px;top:731.14px;width:96.5px'><div style='position:absolute;left:1.2px;top:0;white-space:pre;transform:scaleX(0.960);transform-origin:0 0'>112500</div></div><div class='tri' style='left:1098.5px;top:731.64px'></div><div class='c' style='left:1196.0px;top:731.14px;width:101.5px'><div style='position:absolute;left:1.2px;top:0;white-space:pre;transform:scaleX(0.960);transform-origin:0 0'>112500</div></div><div class='tri' style='left:1196.0px;top:731.64px'></div><div class='c' style='left:21.5px;top:749.93px;width:87px'><div style='position:absolute;left:3.0px;top:0;white-space:pre;transform:scaleX(1.020);transform-origin:0 0'>Duplicated Item</div></div><div class='c' style='left:109.5px;top:749.93px;width:80px'><div style='position:absolute;right:0.6px;top:0;white-space:pre;transform:scaleX(0.939);transform-origin:100% 0'>800250165</div></div><div class='c' style='left:271.5px;top:749.93px;width:79px'><div style='position:absolute;right:0.6px;top:0;white-space:pre;transform:scaleX(0.939);transform-origin:100% 0'>10004247508</div></div><div class='c' style='left:351.5px;top:749.93px;width:121.5px'><div style='position:absolute;left:1.4px;top:0;white-space:pre;transform:scaleX(1.030);transform-origin:0 0'>Mom &amp; Baby</div></div><div class='c' style='left:474.0px;top:749.93px;width:121.0px'><div style='position:absolute;left:1.4px;top:0;white-space:pre;transform:scaleX(1.007);transform-origin:0 0'>Milk Formula &amp; Baby Food</div></div><div class='c' style='left:596.0px;top:749.93px;width:122.5px'><div style='position:absolute;left:1.4px;top:0;white-space:pre;transform:scaleX(1.030);transform-origin:0 0'>Milk Formula</div></div><div class='c' style='left:719.5px;top:749.93px;width:62.5px'><div style='position:absolute;right:0.6px;top:0;white-space:pre;transform:scaleX(0.939);transform-origin:100% 0'>0</div></div><div class='c' style='left:783.0px;top:749.93px;width:35.5px'><div style='position:absolute;left:1.2px;top:0;white-space:pre;transform:scaleX(0.939);transform-origin:0 0'>20085</div></div><div class='tri' style='left:783.0px;top:750.43px'></div><div class='c' style='left:819.5px;top:749.93px;width:131.5px'><div style='position:absolute;left:1.2px;top:0;white-space:pre;transform:scaleX(0.939);transform-origin:0 0'>15450</div></div><div class='tri' style='left:819.5px;top:750.43px'></div><div class='c' style='left:952.0px;top:749.93px;width:81.5px'><div style='position:absolute;left:1.2px;top:0;white-space:pre;transform:scaleX(0.939);transform-origin:0 0'>7725</div></div><div class='tri' style='left:952.0px;top:750.43px'></div><div class='c' style='left:1034.5px;top:749.93px;width:63px'><div style='position:absolute;left:1.2px;top:0;white-space:pre;transform:scaleX(0.939);transform-origin:0 0'>7725</div></div><div class='tri' style='left:1034.5px;top:750.43px'></div><div class='c' style='left:1098.5px;top:749.93px;width:96.5px'><div style='position:absolute;left:1.2px;top:0;white-space:pre;transform:scaleX(0.939);transform-origin:0 0'>15450</div></div><div class='tri' style='left:1098.5px;top:750.43px'></div><div class='c' style='left:1196.0px;top:749.93px;width:101.5px'><div style='position:absolute;left:1.2px;top:0;white-space:pre;transform:scaleX(0.939);transform-origin:0 0'>15450</div></div><div class='tri' style='left:1196.0px;top:750.43px'></div><div class='c' style='left:21.5px;top:768.72px;width:87px'><div style='position:absolute;left:3.0px;top:0;white-space:pre;transform:scaleX(1.009);transform-origin:0 0'>Konicare Minyak</div></div><div class='c' style='left:109.5px;top:768.72px;width:80px'><div style='position:absolute;right:0.6px;top:0;white-space:pre;transform:scaleX(0.939);transform-origin:100% 0'>1554130</div></div><div class='c' style='left:271.5px;top:768.72px;width:79px'><div style='position:absolute;right:0.6px;top:0;white-space:pre;transform:scaleX(0.939);transform-origin:100% 0'>5444741</div></div><div class='c' style='left:351.5px;top:768.72px;width:121.5px'><div style='position:absolute;left:1.4px;top:0;white-space:pre;transform:scaleX(1.017);transform-origin:0 0'>Baju Wanita</div></div><div class='c' style='left:474.0px;top:768.72px;width:121.0px'><div style='position:absolute;left:1.4px;top:0;white-space:pre;transform:scaleX(0.982);transform-origin:0 0'>Atasan</div></div><div class='c' style='left:596.0px;top:768.72px;width:122.5px'><div style='position:absolute;left:1.4px;top:0;white-space:pre;transform:scaleX(0.949);transform-origin:0 0'>Kaos</div></div><div class='c' style='left:719.5px;top:768.72px;width:62.5px'><div style='position:absolute;right:0.6px;top:0;white-space:pre;transform:scaleX(0.939);transform-origin:100% 0'>1</div></div><div class='c' style='left:783.0px;top:768.72px;width:35.5px'><div style='position:absolute;left:1.2px;top:0;white-space:pre;transform:scaleX(0.939);transform-origin:0 0'>45500</div></div><div class='tri' style='left:783.0px;top:769.22px'></div><div class='c' style='left:819.5px;top:768.72px;width:131.5px'><div style='position:absolute;left:1.2px;top:0;white-space:pre;transform:scaleX(0.939);transform-origin:0 0'>35000</div></div><div class='tri' style='left:819.5px;top:769.22px'></div><div class='c' style='left:952.0px;top:768.72px;width:81.5px'><div style='position:absolute;left:1.2px;top:0;white-space:pre;transform:scaleX(0.939);transform-origin:0 0'>17500</div></div><div class='tri' style='left:952.0px;top:769.22px'></div><div class='c' style='left:1034.5px;top:768.72px;width:63px'><div style='position:absolute;left:1.2px;top:0;white-space:pre;transform:scaleX(0.939);transform-origin:0 0'>17500</div></div><div class='tri' style='left:1034.5px;top:769.22px'></div><div class='c' style='left:1098.5px;top:768.72px;width:96.5px'><div style='position:absolute;left:1.2px;top:0;white-space:pre;transform:scaleX(0.939);transform-origin:0 0'>35000</div></div><div class='tri' style='left:1098.5px;top:769.22px'></div><div class='c' style='left:1196.0px;top:768.72px;width:101.5px'><div style='position:absolute;left:1.2px;top:0;white-space:pre;transform:scaleX(0.939);transform-origin:0 0'>35000</div></div><div class='tri' style='left:1196.0px;top:769.22px'></div><div class='c' style='left:21.5px;top:787.51px;width:87px'><div style='position:absolute;left:3.0px;top:0;white-space:pre;transform:scaleX(0.933);transform-origin:0 0'>SC Bundle Deal</div></div><div class='c' style='left:109.5px;top:787.51px;width:80px'><div style='position:absolute;right:0.6px;top:0;white-space:pre;transform:scaleX(0.939);transform-origin:100% 0'>100087321</div></div><div class='c' style='left:271.5px;top:787.51px;width:79px'><div style='position:absolute;right:0.6px;top:0;white-space:pre;transform:scaleX(0.939);transform-origin:100% 0'>10000452393</div></div><div class='c' style='left:351.5px;top:787.51px;width:121.5px'><div style='position:absolute;left:1.4px;top:0;white-space:pre;transform:scaleX(1.017);transform-origin:0 0'>Baju Wanita</div></div><div class='c' style='left:474.0px;top:787.51px;width:121.0px'><div style='position:absolute;left:1.4px;top:0;white-space:pre;transform:scaleX(0.982);transform-origin:0 0'>Atasan</div></div><div class='c' style='left:596.0px;top:787.51px;width:122.5px'><div style='position:absolute;left:1.4px;top:0;white-space:pre;transform:scaleX(0.949);transform-origin:0 0'>Kaos</div></div><div class='c' style='left:719.5px;top:787.51px;width:62.5px'><div style='position:absolute;right:0.6px;top:0;white-space:pre;transform:scaleX(0.939);transform-origin:100% 0'>1</div></div><div class='c' style='left:783.0px;top:787.51px;width:35.5px'><div style='position:absolute;left:1.2px;top:0;white-space:pre;transform:scaleX(0.939);transform-origin:0 0'>14300</div></div><div class='tri' style='left:783.0px;top:788.01px'></div><div class='c' style='left:819.5px;top:787.51px;width:131.5px'><div style='position:absolute;left:1.2px;top:0;white-space:pre;transform:scaleX(0.960);transform-origin:0 0'>110000</div></div><div class='tri' style='left:819.5px;top:788.01px'></div><div class='c' style='left:952.0px;top:787.51px;width:81.5px'><div style='position:absolute;left:1.2px;top:0;white-space:pre;transform:scaleX(0.939);transform-origin:0 0'>55000</div></div><div class='tri' style='left:952.0px;top:788.01px'></div><div class='c' style='left:1034.5px;top:787.51px;width:63px'><div style='position:absolute;left:1.2px;top:0;white-space:pre;transform:scaleX(0.939);transform-origin:0 0'>55000</div></div><div class='tri' style='left:1034.5px;top:788.01px'></div><div class='c' style='left:1098.5px;top:787.51px;width:96.5px'><div style='position:absolute;left:1.2px;top:0;white-space:pre;transform:scaleX(0.960);transform-origin:0 0'>110000</div></div><div class='tri' style='left:1098.5px;top:788.01px'></div><div class='c' style='left:1196.0px;top:787.51px;width:101.5px'><div style='position:absolute;left:1.2px;top:0;white-space:pre;transform:scaleX(0.960);transform-origin:0 0'>110000</div></div><div class='tri' style='left:1196.0px;top:788.01px'></div><div class='c' style='left:21.5px;top:806.30px;width:87px'><div style='position:absolute;left:3.0px;top:0;white-space:pre;transform:scaleX(0.991);transform-origin:0 0'>Test Listing Add</div></div><div class='c' style='left:109.5px;top:806.30px;width:80px'><div style='position:absolute;right:0.6px;top:0;white-space:pre;transform:scaleX(0.939);transform-origin:100% 0'>101053721</div></div><div class='c' style='left:271.5px;top:806.30px;width:79px'><div style='position:absolute;right:0.6px;top:0;white-space:pre;transform:scaleX(0.939);transform-origin:100% 0'>10000548613</div></div><div class='c' style='left:351.5px;top:806.30px;width:121.5px'><div style='position:absolute;left:1.4px;top:0;white-space:pre;transform:scaleX(0.959);transform-origin:0 0'>Tas</div></div><div class='c' style='left:474.0px;top:806.30px;width:121.0px'><div style='position:absolute;left:1.4px;top:0;white-space:pre;transform:scaleX(0.973);transform-origin:0 0'>Tote Bags</div></div><div class='c' style='left:719.5px;top:806.30px;width:62.5px'><div style='position:absolute;right:0.6px;top:0;white-space:pre;transform:scaleX(0.939);transform-origin:100% 0'>0</div></div><div class='c' style='left:783.0px;top:806.30px;width:35.5px'><div style='position:absolute;left:1.2px;top:0;white-space:pre;transform:scaleX(0.939);transform-origin:0 0'>12550</div></div><div class='tri' style='left:783.0px;top:806.80px'></div><div class='c' style='left:819.5px;top:806.30px;width:131.5px'><div style='position:absolute;left:1.2px;top:0;white-space:pre;transform:scaleX(0.939);transform-origin:0 0'>10000</div></div><div class='tri' style='left:819.5px;top:806.80px'></div><div class='c' style='left:952.0px;top:806.30px;width:81.5px'><div style='position:absolute;left:1.2px;top:0;white-space:pre;transform:scaleX(0.939);transform-origin:0 0'>5000</div></div><div class='tri' style='left:952.0px;top:806.80px'></div><div class='c' style='left:1034.5px;top:806.30px;width:63px'><div style='position:absolute;left:1.2px;top:0;white-space:pre;transform:scaleX(0.939);transform-origin:0 0'>5000</div></div><div class='tri' style='left:1034.5px;top:806.80px'></div><div class='c' style='left:1098.5px;top:806.30px;width:96.5px'><div style='position:absolute;left:1.2px;top:0;white-space:pre;transform:scaleX(0.939);transform-origin:0 0'>10000</div></div><div class='tri' style='left:1098.5px;top:806.80px'></div><div class='c' style='left:1196.0px;top:806.30px;width:101.5px'><div style='position:absolute;left:1.2px;top:0;white-space:pre;transform:scaleX(0.939);transform-origin:0 0'>10000</div></div><div class='tri' style='left:1196.0px;top:806.80px'></div><div class='c' style='left:21.5px;top:825.09px;width:87px'><div style='position:absolute;left:3.0px;top:0;white-space:pre;transform:scaleX(1.007);transform-origin:0 0'>Brankas Mini Hitam</div></div><div class='c' style='left:109.5px;top:825.09px;width:80px'><div style='position:absolute;right:0.6px;top:0;white-space:pre;transform:scaleX(0.939);transform-origin:100% 0'>1538558</div></div><div class='c' style='left:271.5px;top:825.09px;width:79px'><div style='position:absolute;right:0.6px;top:0;white-space:pre;transform:scaleX(0.939);transform-origin:100% 0'>10000448924</div></div><div class='c' style='left:351.5px;top:825.09px;width:121.5px'><div style='position:absolute;left:1.4px;top:0;white-space:pre;transform:scaleX(1.017);transform-origin:0 0'>Baju Wanita</div></div><div class='c' style='left:474.0px;top:825.09px;width:121.0px'><div style='position:absolute;left:1.4px;top:0;white-space:pre;transform:scaleX(0.982);transform-origin:0 0'>Atasan</div></div><div class='c' style='left:596.0px;top:825.09px;width:122.5px'><div style='position:absolute;left:1.4px;top:0;white-space:pre;transform:scaleX(0.949);transform-origin:0 0'>Kaos</div></div><div class='c' style='left:719.5px;top:825.09px;width:62.5px'><div style='position:absolute;right:0.6px;top:0;white-space:pre;transform:scaleX(0.939);transform-origin:100% 0'>2</div></div><div class='c' style='left:783.0px;top:825.09px;width:35.5px'><div style='position:absolute;left:1.2px;top:0;white-space:pre;transform:scaleX(0.939);transform-origin:0 0'>26000</div></div><div class='tri' style='left:783.0px;top:825.59px'></div><div class='c' style='left:819.5px;top:825.09px;width:131.5px'><div style='position:absolute;left:1.2px;top:0;white-space:pre;transform:scaleX(0.939);transform-origin:0 0'>2000000</div></div><div class='tri' style='left:819.5px;top:825.59px'></div><div class='c' style='left:952.0px;top:825.09px;width:81.5px'><div style='position:absolute;left:1.2px;top:0;white-space:pre;transform:scaleX(0.939);transform-origin:0 0'>1000000</div></div><div class='tri' style='left:952.0px;top:825.59px'></div><div class='c' style='left:1034.5px;top:825.09px;width:63px'><div style='position:absolute;left:1.2px;top:0;white-space:pre;transform:scaleX(0.939);transform-origin:0 0'>1000000</div></div><div class='tri' style='left:1034.5px;top:825.59px'></div><div class='c' style='left:1098.5px;top:825.09px;width:96.5px'><div style='position:absolute;left:1.2px;top:0;white-space:pre;transform:scaleX(0.939);transform-origin:0 0'>2000000</div></div><div class='tri' style='left:1098.5px;top:825.59px'></div><div class='c' style='left:1196.0px;top:825.09px;width:101.5px'><div style='position:absolute;left:1.2px;top:0;white-space:pre;transform:scaleX(0.939);transform-origin:0 0'>2000000</div></div><div class='tri' style='left:1196.0px;top:825.59px'></div><div class='c' style='left:21.5px;top:843.88px;width:87px'><div style='position:absolute;left:3.0px;top:0;white-space:pre;transform:scaleX(0.964);transform-origin:0 0'>Puzzle Clamor</div></div><div class='c' style='left:109.5px;top:843.88px;width:80px'><div style='position:absolute;right:0.6px;top:0;white-space:pre;transform:scaleX(0.939);transform-origin:100% 0'>100033098</div></div><div class='c' style='left:190.5px;top:843.88px;width:80px'><div style='position:absolute;left:1.4px;top:0;white-space:pre;transform:scaleX(0.975);transform-origin:0 0'>Victoria Back</div></div><div class='c' style='left:271.5px;top:843.88px;width:79px'><div style='position:absolute;right:0.6px;top:0;white-space:pre;transform:scaleX(0.939);transform-origin:100% 0'>5003524</div></div><div class='c' style='left:351.5px;top:843.88px;width:121.5px'><div style='position:absolute;left:1.4px;top:0;white-space:pre;transform:scaleX(1.017);transform-origin:0 0'>Baju Wanita</div></div><div class='c' style='left:474.0px;top:843.88px;width:121.0px'><div style='position:absolute;left:1.4px;top:0;white-space:pre;transform:scaleX(0.982);transform-origin:0 0'>Atasan</div></div><div class='c' style='left:596.0px;top:843.88px;width:122.5px'><div style='position:absolute;left:1.4px;top:0;white-space:pre;transform:scaleX(0.949);transform-origin:0 0'>Kaos</div></div><div class='c' style='left:719.5px;top:843.88px;width:62.5px'><div style='position:absolute;right:0.6px;top:0;white-space:pre;transform:scaleX(0.939);transform-origin:100% 0'>3</div></div><div class='c' style='left:783.0px;top:843.88px;width:35.5px'><div style='position:absolute;left:1.2px;top:0;white-space:pre;transform:scaleX(0.939);transform-origin:0 0'>19270</div></div><div class='tri' style='left:783.0px;top:844.38px'></div><div class='c' style='left:819.5px;top:843.88px;width:131.5px'><div style='position:absolute;left:1.2px;top:0;white-space:pre;transform:scaleX(0.939);transform-origin:0 0'>27000</div></div><div class='tri' style='left:819.5px;top:844.38px'></div><div class='c' style='left:952.0px;top:843.88px;width:81.5px'><div style='position:absolute;left:1.2px;top:0;white-space:pre;transform:scaleX(0.939);transform-origin:0 0'>13950</div></div><div class='tri' style='left:952.0px;top:844.38px'></div><div class='c' style='left:1034.5px;top:843.88px;width:63px'><div style='position:absolute;left:1.2px;top:0;white-space:pre;transform:scaleX(0.939);transform-origin:0 0'>13950</div></div><div class='tri' style='left:1034.5px;top:844.38px'></div><div class='c' style='left:1098.5px;top:843.88px;width:96.5px'><div style='position:absolute;left:1.2px;top:0;white-space:pre;transform:scaleX(0.939);transform-origin:0 0'>27900</div></div><div class='tri' style='left:1098.5px;top:844.38px'></div><div class='c' style='left:1196.0px;top:843.88px;width:101.5px'><div style='position:absolute;left:1.2px;top:0;white-space:pre;transform:scaleX(0.939);transform-origin:0 0'>27900</div></div><div class='tri' style='left:1196.0px;top:844.38px'></div>
<div class='t' style='left:26.80px;top:11.80px;font-size:18px;color:#ffffff;letter-spacing:0px;font-weight:normal;font-family:"Liberation Sans", sans-serif;font-style:normal;transform:scaleX(0.8168);transform-origin:0 0;'>File</div><div class='t' style='left:97.80px;top:11.80px;font-size:18px;color:#1e8550;letter-spacing:0px;font-weight:normal;font-family:"Liberation Sans", sans-serif;font-style:normal;transform:scaleX(0.9497);transform-origin:0 0;'>Home</div><div class='t' style='left:170.80px;top:11.80px;font-size:18px;color:#ffffff;letter-spacing:0px;font-weight:normal;font-family:"Liberation Sans", sans-serif;font-style:normal;transform:scaleX(0.9127);transform-origin:0 0;'>Insert</div><div class='t' style='left:240.00px;top:11.80px;font-size:18px;color:#ffffff;letter-spacing:0px;font-weight:normal;font-family:"Liberation Sans", sans-serif;font-style:normal;transform:scaleX(0.8853);transform-origin:0 0;'>Page Layout</div><div class='t' style='left:357.00px;top:11.80px;font-size:18px;color:#ffffff;letter-spacing:0px;font-weight:normal;font-family:"Liberation Sans", sans-serif;font-style:normal;transform:scaleX(0.9011);transform-origin:0 0;'>Formulas</div><div class='t' style='left:453.00px;top:11.80px;font-size:18px;color:#ffffff;letter-spacing:0px;font-weight:normal;font-family:"Liberation Sans", sans-serif;font-style:normal;transform:scaleX(0.8993);transform-origin:0 0;'>Data</div><div class='t' style='left:515.40px;top:11.80px;font-size:18px;color:#ffffff;letter-spacing:0px;font-weight:normal;font-family:"Liberation Sans", sans-serif;font-style:normal;transform:scaleX(0.8521);transform-origin:0 0;'>Review</div><div class='t' style='left:592.70px;top:11.80px;font-size:18px;color:#ffffff;letter-spacing:0px;font-weight:normal;font-family:"Liberation Sans", sans-serif;font-style:normal;transform:scaleX(0.9121);transform-origin:0 0;'>View</div><div class='t' style='left:679.00px;top:11.80px;font-size:18px;color:#d9e6da;letter-spacing:0px;font-weight:normal;font-family:"Liberation Sans", sans-serif;font-style:normal;transform:scaleX(0.9404);transform-origin:0 0;'>Tell me what you want to do...</div><div class='t' style='left:1166.70px;top:11.80px;font-size:18px;color:#ffffff;letter-spacing:0px;font-weight:normal;font-family:"Liberation Sans", sans-serif;font-style:normal;transform:scaleX(0.9138);transform-origin:0 0;'>Sign in</div><div class='t' style='left:1267.40px;top:11.80px;font-size:18px;color:#ffffff;letter-spacing:0px;font-weight:normal;font-family:"Liberation Sans", sans-serif;font-style:normal;transform:scaleX(0.8991);transform-origin:0 0;'>Share</div><div class='t' style='left:6.70px;top:143.00px;font-size:14.7px;color:#666666;letter-spacing:0px;font-weight:normal;font-family:"Liberation Sans", sans-serif;font-style:normal;transform:scaleX(1.0036);transform-origin:0 0;'>Clipboard</div><div class='t' style='left:201.00px;top:143.20px;font-size:14.7px;color:#666666;letter-spacing:0px;font-weight:normal;font-family:"Liberation Sans", sans-serif;font-style:normal;transform:scaleX(0.9799);transform-origin:0 0;'>Font</div><div class='t' style='left:407.80px;top:143.40px;font-size:14.7px;color:#666666;letter-spacing:0px;font-weight:normal;font-family:"Liberation Sans", sans-serif;font-style:normal;transform:scaleX(1.0381);transform-origin:0 0;'>Alignment</div><div class='t' style='left:603.40px;top:143.20px;font-size:14.7px;color:#666666;letter-spacing:0px;font-weight:normal;font-family:"Liberation Sans", sans-serif;font-style:normal;transform:scaleX(1.0067);transform-origin:0 0;'>Number</div><div class='t' style='left:830.00px;top:142.90px;font-size:14.7px;color:#666666;letter-spacing:0px;font-weight:normal;font-family:"Liberation Sans", sans-serif;font-style:normal;transform:scaleX(0.9150);transform-origin:0 0;'>Styles</div><div class='t' style='left:1009.00px;top:143.00px;font-size:14.7px;color:#666666;letter-spacing:0px;font-weight:normal;font-family:"Liberation Sans", sans-serif;font-style:normal;transform:scaleX(0.9401);transform-origin:0 0;'>Cells</div><div class='t' style='left:1139.70px;top:143.00px;font-size:14.7px;color:#666666;letter-spacing:0px;font-weight:normal;font-family:"Liberation Sans", sans-serif;font-style:normal;transform:scaleX(0.9862);transform-origin:0 0;'>Editing</div><div class='t' style='left:9.00px;top:94.00px;font-size:16.2px;color:#444444;letter-spacing:0px;font-weight:normal;font-family:"Liberation Sans", sans-serif;font-style:normal;transform:scaleX(0.9129);transform-origin:0 0;'>Paste</div><div class='t' style='left:738.20px;top:94.20px;font-size:16.3px;color:#444444;letter-spacing:0px;font-weight:normal;font-family:"Liberation Sans", sans-serif;font-style:normal;transform:scaleX(1.0360);transform-origin:0 0;'>Conditional</div><div class='t' style='left:734.00px;top:116.30px;font-size:16.3px;color:#444444;letter-spacing:0px;font-weight:normal;font-family:"Liberation Sans", sans-serif;font-style:normal;transform:scaleX(1.0420);transform-origin:0 0;'>Formatting</div><div class='t' style='left:832.30px;top:94.20px;font-size:16.3px;color:#444444;letter-spacing:0px;font-weight:normal;font-family:"Liberation Sans", sans-serif;font-style:normal;transform:scaleX(1.0028);transform-origin:0 0;'>Format as</div><div class='t' style='left:845.30px;top:116.30px;font-size:16.3px;color:#444444;letter-spacing:0px;font-weight:normal;font-family:"Liberation Sans", sans-serif;font-style:normal;transform:scaleX(0.9558);transform-origin:0 0;'>Table</div><div class='t' style='left:925.00px;top:94.20px;font-size:16.3px;color:#444444;letter-spacing:0px;font-weight:normal;font-family:"Liberation Sans", sans-serif;font-style:normal;transform:scaleX(0.9087);transform-origin:0 0;'>Cell</div><div class='t' style='left:911.40px;top:116.30px;font-size:16.3px;color:#444444;letter-spacing:0px;font-weight:normal;font-family:"Liberation Sans", sans-serif;font-style:normal;transform:scaleX(0.9449);transform-origin:0 0;'>Styles</div><div class='t' style='left:1004.00px;top:46.80px;font-size:16.3px;color:#444444;letter-spacing:0px;font-weight:normal;font-family:"Liberation Sans", sans-serif;font-style:normal;transform:scaleX(1.0114);transform-origin:0 0;'>Insert</div><div class='t' style='left:1004.00px;top:75.90px;font-size:16.3px;color:#444444;letter-spacing:0px;font-weight:normal;font-family:"Liberation Sans", sans-serif;font-style:normal;transform:scaleX(0.9941);transform-origin:0 0;'>Delete</div><div class='t' style='left:1004.00px;top:105.00px;font-size:16.3px;color:#444444;letter-spacing:0px;font-weight:normal;font-family:"Liberation Sans", sans-serif;font-style:normal;transform:scaleX(1.0276);transform-origin:0 0;'>Format</div><div class='t' style='left:1129.00px;top:93.50px;font-size:16.3px;color:#444444;letter-spacing:0px;font-weight:normal;font-family:"Liberation Sans", sans-serif;font-style:normal;transform:scaleX(1.0718);transform-origin:0 0;'>Sort &amp;</div><div class='t' style='left:1130.80px;top:116.40px;font-size:16.3px;color:#444444;letter-spacing:0px;font-weight:normal;font-family:"Liberation Sans", sans-serif;font-style:normal;transform:scaleX(0.9451);transform-origin:0 0;'>Filter</div><div class='t' style='left:1185.80px;top:93.50px;font-size:16.3px;color:#444444;letter-spacing:0px;font-weight:normal;font-family:"Liberation Sans", sans-serif;font-style:normal;transform:scaleX(1.0369);transform-origin:0 0;'>Find &amp;</div><div class='t' style='left:1182.70px;top:116.40px;font-size:16.3px;color:#444444;letter-spacing:0px;font-weight:normal;font-family:"Liberation Sans", sans-serif;font-style:normal;transform:scaleX(0.9411);transform-origin:0 0;'>Select</div><div class='t' style='left:108.70px;top:59.60px;font-size:17.6px;color:#444444;letter-spacing:0px;font-weight:normal;font-family:"Liberation Sans", sans-serif;font-style:normal;transform:scaleX(0.9243);transform-origin:0 0;'>Calibri</div><div class='t' style='left:236.50px;top:59.60px;font-size:17.6px;color:#444444;letter-spacing:0px;font-weight:normal;font-family:"Liberation Sans", sans-serif;font-style:normal;transform:scaleX(0.9033);transform-origin:0 0;'>11</div><div class='t' style='left:562.40px;top:59.40px;font-size:17.6px;color:#444444;letter-spacing:0px;font-weight:normal;font-family:"Liberation Sans", sans-serif;font-style:normal;transform:scaleX(0.8723);transform-origin:0 0;'>General</div><div class='t' style='left:10.00px;top:183.40px;font-size:18.3px;color:#333;letter-spacing:0px;font-weight:normal;font-family:"Liberation Sans", sans-serif;font-style:normal;transform:scaleX(0.9609);transform-origin:0 0;'>A1</div><div class='t' style='left:363.50px;top:184.50px;font-size:17.7px;color:#333;letter-spacing:0px;font-weight:normal;font-family:"Liberation Sans", sans-serif;font-style:normal;transform:scaleX(1.1035);transform-origin:0 0;'>nama_produk (opsional)</div><div class='t' style='left:61.06px;top:227.40px;font-size:11.8px;color:#1e7145;letter-spacing:0px;font-weight:normal;font-family:"Liberation Sans", sans-serif;font-style:normal;'>A</div><div class='t' style='left:145.38px;top:228.40px;font-size:11.4px;color:#1a1a1a;letter-spacing:0px;font-weight:bold;font-family:"Liberation Sans", sans-serif;font-style:normal;'>B</div><div class='t' style='left:226.38px;top:228.40px;font-size:11.4px;color:#1a1a1a;letter-spacing:0px;font-weight:bold;font-family:"Liberation Sans", sans-serif;font-style:normal;'>C</div><div class='t' style='left:306.88px;top:228.40px;font-size:11.4px;color:#1a1a1a;letter-spacing:0px;font-weight:bold;font-family:"Liberation Sans", sans-serif;font-style:normal;'>D</div><div class='t' style='left:408.45px;top:228.40px;font-size:11.4px;color:#1a1a1a;letter-spacing:0px;font-weight:bold;font-family:"Liberation Sans", sans-serif;font-style:normal;'>E</div><div class='t' style='left:531.02px;top:228.40px;font-size:11.4px;color:#1a1a1a;letter-spacing:0px;font-weight:bold;font-family:"Liberation Sans", sans-serif;font-style:normal;'>F</div><div class='t' style='left:652.81px;top:228.40px;font-size:11.4px;color:#1a1a1a;letter-spacing:0px;font-weight:bold;font-family:"Liberation Sans", sans-serif;font-style:normal;'>G</div><div class='t' style='left:746.63px;top:228.40px;font-size:11.4px;color:#1a1a1a;letter-spacing:0px;font-weight:bold;font-family:"Liberation Sans", sans-serif;font-style:normal;'>H</div><div class='t' style='left:799.16px;top:228.40px;font-size:11.4px;color:#1a1a1a;letter-spacing:0px;font-weight:bold;font-family:"Liberation Sans", sans-serif;font-style:normal;'>I</div><div class='t' style='left:882.08px;top:228.40px;font-size:11.4px;color:#1a1a1a;letter-spacing:0px;font-weight:bold;font-family:"Liberation Sans", sans-serif;font-style:normal;'>J</div><div class='t' style='left:988.63px;top:228.40px;font-size:11.4px;color:#1a1a1a;letter-spacing:0px;font-weight:bold;font-family:"Liberation Sans", sans-serif;font-style:normal;'>K</div><div class='t' style='left:1062.52px;top:228.40px;font-size:11.4px;color:#1a1a1a;letter-spacing:0px;font-weight:bold;font-family:"Liberation Sans", sans-serif;font-style:normal;'>L</div><div class='t' style='left:1142.00px;top:228.40px;font-size:11.4px;color:#1a1a1a;letter-spacing:0px;font-weight:bold;font-family:"Liberation Sans", sans-serif;font-style:normal;'>M</div><div class='t' style='left:1242.31px;top:228.40px;font-size:11.4px;color:#1a1a1a;letter-spacing:0px;font-weight:bold;font-family:"Liberation Sans", sans-serif;font-style:normal;'>O</div><div class='t' style='left:6.24px;top:246.20px;font-size:12.6px;color:#1e7145;letter-spacing:-0.7px;font-weight:normal;font-family:"Liberation Sans", sans-serif;font-style:normal;-webkit-text-stroke:0.25px currentColor;'>1</div><div class='t' style='left:6.24px;top:264.99px;font-size:12.6px;color:#111;letter-spacing:-0.7px;font-weight:normal;font-family:"Liberation Sans", sans-serif;font-style:normal;-webkit-text-stroke:0.25px currentColor;'>2</div><div class='t' style='left:6.24px;top:283.78px;font-size:12.6px;color:#111;letter-spacing:-0.7px;font-weight:normal;font-family:"Liberation Sans", sans-serif;font-style:normal;-webkit-text-stroke:0.25px currentColor;'>3</div><div class='t' style='left:6.24px;top:302.57px;font-size:12.6px;color:#111;letter-spacing:-0.7px;font-weight:normal;font-family:"Liberation Sans", sans-serif;font-style:normal;-webkit-text-stroke:0.25px currentColor;'>4</div><div class='t' style='left:6.24px;top:321.36px;font-size:12.6px;color:#111;letter-spacing:-0.7px;font-weight:normal;font-family:"Liberation Sans", sans-serif;font-style:normal;-webkit-text-stroke:0.25px currentColor;'>5</div><div class='t' style='left:6.24px;top:340.15px;font-size:12.6px;color:#111;letter-spacing:-0.7px;font-weight:normal;font-family:"Liberation Sans", sans-serif;font-style:normal;-webkit-text-stroke:0.25px currentColor;'>6</div><div class='t' style='left:6.24px;top:358.94px;font-size:12.6px;color:#111;letter-spacing:-0.7px;font-weight:normal;font-family:"Liberation Sans", sans-serif;font-style:normal;-webkit-text-stroke:0.25px currentColor;'>7</div><div class='t' style='left:6.24px;top:377.73px;font-size:12.6px;color:#111;letter-spacing:-0.7px;font-weight:normal;font-family:"Liberation Sans", sans-serif;font-style:normal;-webkit-text-stroke:0.25px currentColor;'>8</div><div class='t' style='left:6.24px;top:396.52px;font-size:12.6px;color:#111;letter-spacing:-0.7px;font-weight:normal;font-family:"Liberation Sans", sans-serif;font-style:normal;-webkit-text-stroke:0.25px currentColor;'>9</div><div class='t' style='left:3.10px;top:415.31px;font-size:12.6px;color:#111;letter-spacing:-0.7px;font-weight:normal;font-family:"Liberation Sans", sans-serif;font-style:normal;-webkit-text-stroke:0.25px currentColor;'>10</div><div class='t' style='left:3.56px;top:434.10px;font-size:12.6px;color:#111;letter-spacing:-0.7px;font-weight:normal;font-family:"Liberation Sans", sans-serif;font-style:normal;-webkit-text-stroke:0.25px currentColor;'>11</div><div class='t' style='left:3.10px;top:452.89px;font-size:12.6px;color:#111;letter-spacing:-0.7px;font-weight:normal;font-family:"Liberation Sans", sans-serif;font-style:normal;-webkit-text-stroke:0.25px currentColor;'>12</div><div class='t' style='left:3.10px;top:471.68px;font-size:12.6px;color:#111;letter-spacing:-0.7px;font-weight:normal;font-family:"Liberation Sans", sans-serif;font-style:normal;-webkit-text-stroke:0.25px currentColor;'>13</div><div class='t' style='left:3.10px;top:490.47px;font-size:12.6px;color:#111;letter-spacing:-0.7px;font-weight:normal;font-family:"Liberation Sans", sans-serif;font-style:normal;-webkit-text-stroke:0.25px currentColor;'>14</div><div class='t' style='left:3.10px;top:509.26px;font-size:12.6px;color:#111;letter-spacing:-0.7px;font-weight:normal;font-family:"Liberation Sans", sans-serif;font-style:normal;-webkit-text-stroke:0.25px currentColor;'>15</div><div class='t' style='left:3.10px;top:528.05px;font-size:12.6px;color:#111;letter-spacing:-0.7px;font-weight:normal;font-family:"Liberation Sans", sans-serif;font-style:normal;-webkit-text-stroke:0.25px currentColor;'>16</div><div class='t' style='left:3.10px;top:546.84px;font-size:12.6px;color:#111;letter-spacing:-0.7px;font-weight:normal;font-family:"Liberation Sans", sans-serif;font-style:normal;-webkit-text-stroke:0.25px currentColor;'>17</div><div class='t' style='left:3.10px;top:565.63px;font-size:12.6px;color:#111;letter-spacing:-0.7px;font-weight:normal;font-family:"Liberation Sans", sans-serif;font-style:normal;-webkit-text-stroke:0.25px currentColor;'>18</div><div class='t' style='left:3.10px;top:584.42px;font-size:12.6px;color:#111;letter-spacing:-0.7px;font-weight:normal;font-family:"Liberation Sans", sans-serif;font-style:normal;-webkit-text-stroke:0.25px currentColor;'>19</div><div class='t' style='left:3.10px;top:603.21px;font-size:12.6px;color:#111;letter-spacing:-0.7px;font-weight:normal;font-family:"Liberation Sans", sans-serif;font-style:normal;-webkit-text-stroke:0.25px currentColor;'>20</div><div class='t' style='left:3.10px;top:622.00px;font-size:12.6px;color:#111;letter-spacing:-0.7px;font-weight:normal;font-family:"Liberation Sans", sans-serif;font-style:normal;-webkit-text-stroke:0.25px currentColor;'>21</div><div class='t' style='left:3.10px;top:640.79px;font-size:12.6px;color:#111;letter-spacing:-0.7px;font-weight:normal;font-family:"Liberation Sans", sans-serif;font-style:normal;-webkit-text-stroke:0.25px currentColor;'>22</div><div class='t' style='left:3.10px;top:659.58px;font-size:12.6px;color:#111;letter-spacing:-0.7px;font-weight:normal;font-family:"Liberation Sans", sans-serif;font-style:normal;-webkit-text-stroke:0.25px currentColor;'>23</div><div class='t' style='left:3.10px;top:678.37px;font-size:12.6px;color:#111;letter-spacing:-0.7px;font-weight:normal;font-family:"Liberation Sans", sans-serif;font-style:normal;-webkit-text-stroke:0.25px currentColor;'>24</div><div class='t' style='left:3.10px;top:697.16px;font-size:12.6px;color:#111;letter-spacing:-0.7px;font-weight:normal;font-family:"Liberation Sans", sans-serif;font-style:normal;-webkit-text-stroke:0.25px currentColor;'>25</div><div class='t' style='left:3.10px;top:715.95px;font-size:12.6px;color:#111;letter-spacing:-0.7px;font-weight:normal;font-family:"Liberation Sans", sans-serif;font-style:normal;-webkit-text-stroke:0.25px currentColor;'>26</div><div class='t' style='left:3.10px;top:734.74px;font-size:12.6px;color:#111;letter-spacing:-0.7px;font-weight:normal;font-family:"Liberation Sans", sans-serif;font-style:normal;-webkit-text-stroke:0.25px currentColor;'>27</div><div class='t' style='left:3.10px;top:753.53px;font-size:12.6px;color:#111;letter-spacing:-0.7px;font-weight:normal;font-family:"Liberation Sans", sans-serif;font-style:normal;-webkit-text-stroke:0.25px currentColor;'>28</div><div class='t' style='left:3.10px;top:772.32px;font-size:12.6px;color:#111;letter-spacing:-0.7px;font-weight:normal;font-family:"Liberation Sans", sans-serif;font-style:normal;-webkit-text-stroke:0.25px currentColor;'>29</div><div class='t' style='left:3.10px;top:791.11px;font-size:12.6px;color:#111;letter-spacing:-0.7px;font-weight:normal;font-family:"Liberation Sans", sans-serif;font-style:normal;-webkit-text-stroke:0.25px currentColor;'>30</div><div class='t' style='left:3.10px;top:809.90px;font-size:12.6px;color:#111;letter-spacing:-0.7px;font-weight:normal;font-family:"Liberation Sans", sans-serif;font-style:normal;-webkit-text-stroke:0.25px currentColor;'>31</div><div class='t' style='left:3.10px;top:828.69px;font-size:12.6px;color:#111;letter-spacing:-0.7px;font-weight:normal;font-family:"Liberation Sans", sans-serif;font-style:normal;-webkit-text-stroke:0.25px currentColor;'>32</div><div class='t' style='left:3.10px;top:847.48px;font-size:12.6px;color:#111;letter-spacing:-0.7px;font-weight:normal;font-family:"Liberation Sans", sans-serif;font-style:normal;-webkit-text-stroke:0.25px currentColor;'>33</div><div class='t' style='left:448.50px;top:61.50px;font-size:14px;color:#555;letter-spacing:0px;font-weight:normal;font-family:"Liberation Sans", sans-serif;font-style:normal;transform:rotate(-45deg);transform-origin:0 80%;'>ab</div><div class='t' style='left:566.60px;top:94.60px;font-size:24px;color:#505050;letter-spacing:0px;font-weight:normal;font-family:"Liberation Sans", sans-serif;font-style:normal;transform:scaleX(0.9731);transform-origin:0 0;'>$</div><div class='t' style='left:604.20px;top:98.00px;font-size:21px;color:#505050;letter-spacing:0px;font-weight:normal;font-family:"Liberation Sans", sans-serif;font-style:normal;transform:scaleX(1.0595);transform-origin:0 0;'>%</div><div class='t' style='left:679.20px;top:96.40px;font-size:11px;color:#444;letter-spacing:0px;font-weight:normal;font-family:"Liberation Sans", sans-serif;font-style:normal;transform:scaleX(1.1973);transform-origin:0 0;'>.0</div><div class='t' style='left:672.40px;top:108.00px;font-size:11px;color:#444;letter-spacing:0px;font-weight:normal;font-family:"Liberation Sans", sans-serif;font-style:normal;transform:scaleX(1.1506);transform-origin:0 0;'>.00</div><div class='t' style='left:700.60px;top:96.40px;font-size:11px;color:#444;letter-spacing:0px;font-weight:normal;font-family:"Liberation Sans", sans-serif;font-style:normal;transform:scaleX(1.1506);transform-origin:0 0;'>.00</div><div class='t' style='left:707.50px;top:108.00px;font-size:11px;color:#444;letter-spacing:0px;font-weight:normal;font-family:"Liberation Sans", sans-serif;font-style:normal;transform:scaleX(1.1973);transform-origin:0 0;'>.0</div><div class='t' style='left:307.50px;top:182.50px;font-size:19px;color:#5a5a5a;letter-spacing:0px;font-weight:normal;font-family:"Liberation Serif", serif;font-style:italic;transform:scaleX(1.2027);transform-origin:0 0;'>fx</div>
<div style='position:absolute;left:21px;top:241.5px;width:84.5px;height:17.5px;border:2px solid #1e7145'></div><div style='position:absolute;left:105px;top:257.5px;width:5px;height:5.5px;background:#1e7145;border:1px solid #fff'></div><div style='position:absolute;left:0;top:853px;width:1300px;height:3px;background:#f2f2f2'></div><div style='position:absolute;left:0;top:852.5px;width:1300px;height:1px;background:#bdbdbd'></div><svg style='position:absolute;left:0;top:0' width='1300' height='856' viewBox='0 0 1300 856'><path d='M661.5,27.5 C661,24 657,21.5 657,17.5 A7,7 0 0 1 671,17.5 C671,21.5 667,24 666.5,27.5 Z' fill='none' stroke='#ffffff' stroke-width='1.3'/><rect x='661' y='28' width='6' height='2.2' fill='#ffffff'/><rect x='661.8' y='31' width='4.4' height='1.6' fill='#e0e8e0'/><circle cx='1248.2' cy='18' r='6' fill='none' stroke='#ffffff' stroke-width='1.5'/><path d='M1238.8,33.5 C1239.5,28 1244,24.5 1249.5,24.3' fill='none' stroke='#ffffff' stroke-width='1.5'/><path d='M1249,28.7 H1259 M1254,23.7 V33.7' stroke='#ffffff' stroke-width='1.5'/><rect x='11.5' y='52' width='31.2' height='34.6' rx='1.5' fill='#fdc462'/><rect x='17' y='52' width='20.5' height='6' fill='#ffffff'/><rect x='17.6' y='52.5' width='19.6' height='3.8' fill='#6d6d6d'/><path d='M23.3,52.5 V48.4 H30.3 V52.5' fill='none' stroke='#6d6d6d' stroke-width='1.8'/><path d='M30.8,63.4 H42.7 L49.8,70.4 V88.9 H30.8 Z' fill='#ffffff' stroke='#757575' stroke-width='1.5'/><path d='M42.7,63.4 V70.4 H49.8' fill='none' stroke='#757575' stroke-width='1.2'/><path d='M24.25,123.0 L30.75,123.0 L27.5,127.0 Z' fill='#555'/><path d='M62.3,47.2 L66.5,55.5 L71.8,61.5 M74,47.2 L69.8,55.5 L64.5,61.5' fill='none' stroke='#505050' stroke-width='2.4' stroke-linejoin='round'/><path d='M62.8,47.5 L68.2,56.5 L73.6,47.5' fill='none' stroke='#505050' stroke-width='1.4'/><circle cx='62.8' cy='64' r='3.3' fill='#fff' stroke='#4a7fc7' stroke-width='1.4'/><circle cx='73.3' cy='64' r='3.3' fill='#fff' stroke='#4a7fc7' stroke-width='1.4'/><path d='M59.8,78.2 H67 L70.3,81.5 V92.5 H59.8 Z' fill='#fff' stroke='#707070' stroke-width='1.2'/><path d='M61.5,82.6 H65.5 M61.5,85.4 H67.5 M61.5,88.4 H67.5' stroke='#3d7fd1' stroke-width='1'/><path d='M68.3,85 H75 L78.1,88.2 V98.6 H68.3 Z' fill='#fff' stroke='#707070' stroke-width='1.2'/><path d='M70,92.1 H76.5' stroke='#3d7fd1' stroke-width='1.1'/><path d='M70,94.9 H76.5' stroke='#3aa39a' stroke-width='1.1'/><path d='M86.2,87.69999999999999 L92.60000000000001,87.69999999999999 L89.4,91.5 Z' fill='#555'/><path d='M58.1,119.4 L65.5,117.2 L72.5,124 L66.4,129.5 Z' fill='#fcc48e'/><path d='M67,114.5 L71,112 L75.8,117.5 L72.8,121.8 Z' fill='#6b6b6b'/><path d='M73.5,115 L78.5,110.8' stroke='#6b6b6b' stroke-width='3.2' stroke-linecap='round'/><path d='M221.6,66.45 L227.6,66.45 L224.6,69.95 Z' fill='#555'/><path d='M278.7,66.45 L284.7,66.45 L281.7,69.95 Z' fill='#555'/><path d='M296,77.2 L302.4,62.4 L308.8,77.2 M298.6,71.6 H306.2' fill='none' stroke='#505050' stroke-width='2.5'/><path d='M307.5,62.5 L310.6,58 L313.8,62.5 Z' fill='#2f6fc9'/><path d='M324.2,77.2 L329.5,64.6 L334.8,77.2 M326.3,72.5 H332.7' fill='none' stroke='#505050' stroke-width='2.2'/><path d='M335,58.3 H341.8 L338.4,62.3 Z' fill='#2f6fc9'/><path d='M114.8,100 H121 C124.5,100 125.6,102 125.6,103.7 C125.6,105.6 124.3,106.8 122.7,107.2 C125,107.6 126.2,109.3 126.2,111.2 C126.2,113.4 124.8,115 121.5,115 H114.8 Z M118,102.6 V105.9 H120.8 C122,105.9 122.5,105.2 122.5,104.2 C122.5,103.2 122,102.6 120.8,102.6 Z M118,108.4 V112.4 H121.2 C122.5,112.4 123.1,111.6 123.1,110.4 C123.1,109.2 122.5,108.4 121.2,108.4 Z' fill='#444' fill-rule='evenodd'/><path d='M146,100 H153 M141.5,115 H148.5 M149.5,100 L145,115' fill='none' stroke='#444' stroke-width='1.8'/><path d='M170.5,99.5 V110 C170.5,113.5 172.5,115 175.6,115 C178.7,115 180.7,113.5 180.7,110 V99.5' fill='none' stroke='#444' stroke-width='2.2'/><path d='M169.6,117 H182' stroke='#444' stroke-width='1.2'/><path d='M193.5,107.6 L199.5,107.6 L196.5,111.4 Z' fill='#555'/><path d='M216.8,98.4 H236.3 V117.3 H216.8 Z M226.5,98.4 V117.3 M216.8,108 H236.3' fill='none' stroke='#8a8a8a' stroke-width='1' stroke-dasharray='1,1.2'/><path d='M216.3,117.6 H237' stroke='#7a7a7a' stroke-width='1.6'/><path d='M244.25,107.6 L250.75,107.6 L247.5,111.4 Z' fill='#555'/><path d='M270.3,108 L278,100.8 L285,107.8 L277.6,114.4 Z' fill='#fff' stroke='#555' stroke-width='1.3'/><path d='M276,101.5 C275,97 280,96.5 280,101 V104' fill='none' stroke='#555' stroke-width='1.1'/><path d='M283,101 C286.5,101.5 287.5,105 286,110.5' fill='none' stroke='#2f6fc9' stroke-width='1.6'/><rect x='266.4' y='114' width='22.6' height='5.8' fill='#ffff00'/><path d='M295.35,107.6 L301.85,107.6 L298.6,111.4 Z' fill='#555'/><path d='M311.8,114 L318.6,99.3 L325.4,114 M314.4,108.3 H322.8' fill='none' stroke='#555' stroke-width='2.6'/><rect x='307.8' y='114' width='22.9' height='5.8' fill='#ff0000'/><path d='M336.05,107.6 L342.55,107.6 L339.3,111.4 Z' fill='#555'/><path d='M359.3,58.2 H378.6' stroke='#6a6a6a' stroke-width='1.2'/><path d='M362.2,62 H375.7' stroke='#6a6a6a' stroke-width='1.2'/><path d='M359.3,65.6 H378.6' stroke='#6a6a6a' stroke-width='1.2'/><path d='M388.2,63.7 H406.4' stroke='#6a6a6a' stroke-width='1.2'/><path d='M390.8,67.3 H403.6' stroke='#6a6a6a' stroke-width='1.2'/><path d='M388.2,71.3 H406.4' stroke='#6a6a6a' stroke-width='1.2'/><path d='M416,69.7 H434.8' stroke='#6a6a6a' stroke-width='1.2'/><path d='M419.2,73.3 H432' stroke='#6a6a6a' stroke-width='1.2'/><path d='M416,76.9 H434.8' stroke='#6a6a6a' stroke-width='2'/><path d='M455.5,76.4 L465.5,66.4 M460.5,66 H466 V71.5' fill='none' stroke='#555' stroke-width='1.3'/><path d='M471.5,67.3 L478.5,67.3 L475,71.3 Z' fill='#555'/><path d='M359.5,99.6 H378.4' stroke='#6a6a6a' stroke-width='1.2'/><path d='M387.9,99.6 H406.5' stroke='#6a6a6a' stroke-width='1.2'/><path d='M415.8,99.6 H435' stroke='#6a6a6a' stroke-width='1.2'/><path d='M446.2,99.6 H466.7' stroke='#6a6a6a' stroke-width='1.2'/><path d='M474,99.6 H494.9' stroke='#6a6a6a' stroke-width='1.2'/><path d='M359.5,103.5 H374.8' stroke='#6a6a6a' stroke-width='1.2'/><path d='M390.7,103.5 H403.8' stroke='#6a6a6a' stroke-width='1.2'/><path d='M420.2,103.5 H435' stroke='#6a6a6a' stroke-width='1.2'/><path d='M456.5,103.5 H466.7' stroke='#6a6a6a' stroke-width='1.2'/><path d='M484.3,103.5 H494.9' stroke='#6a6a6a' stroke-width='1.2'/><path d='M359.5,107 H378.4' stroke='#6a6a6a' stroke-width='1.2'/><path d='M387.9,107 H406.5' stroke='#6a6a6a' stroke-width='1.2'/><path d='M415.8,107 H435' stroke='#6a6a6a' stroke-width='1.2'/><path d='M456.5,107 H466.7' stroke='#6a6a6a' stroke-width='1.2'/><path d='M484.3,107 H494.9' stroke='#6a6a6a' stroke-width='1.2'/><path d='M359.5,110.7 H374.8' stroke='#6a6a6a' stroke-width='1.2'/><path d='M390.7,110.7 H403.8' stroke='#6a6a6a' stroke-width='1.2'/><path d='M420.2,110.7 H435' stroke='#6a6a6a' stroke-width='1.2'/><path d='M456.5,110.7 H466.7' stroke='#6a6a6a' stroke-width='1.2'/><path d='M484.3,110.7 H494.9' stroke='#6a6a6a' stroke-width='1.2'/><path d='M359.5,114.9 H378.4' stroke='#6a6a6a' stroke-width='1.2'/><path d='M387.9,114.9 H406.5' stroke='#6a6a6a' stroke-width='1.2'/><path d='M415.8,114.9 H435' stroke='#6a6a6a' stroke-width='1.2'/><path d='M456.5,114.9 H466.7' stroke='#6a6a6a' stroke-width='1.2'/><path d='M484.3,114.9 H494.9' stroke='#6a6a6a' stroke-width='1.2'/><path d='M359.5,118.4 H374.8' stroke='#6a6a6a' stroke-width='1.2'/><path d='M390.7,118.4 H403.8' stroke='#6a6a6a' stroke-width='1.2'/><path d='M420.2,118.4 H435' stroke='#6a6a6a' stroke-width='1.2'/><path d='M446.2,118.4 H466.7' stroke='#6a6a6a' stroke-width='1.2'/><path d='M474,118.4 H494.9' stroke='#6a6a6a' stroke-width='1.2'/><path d='M455,107.2 H449 M452,103.5 L447.5,107.2 L452,111' fill='none' stroke='#2f6fc9' stroke-width='2.2'/><path d='M474.5,107.2 H481 M478,103.5 L482.5,107.2 L478,111' fill='none' stroke='#2f6fc9' stroke-width='2.2'/><rect x='512.6' y='58.2' width='13' height='6' fill='#fff' stroke='#707070' stroke-width='1.3'/><path d='M514.5,61.2 H530' stroke='#8a7fd0' stroke-width='1'/><rect x='512.6' y='67.6' width='13' height='10.3' fill='#fff' stroke='#707070' stroke-width='1.3'/><path d='M515,71.3 H522.5 M515,74.1 H522.5' stroke='#3d7fd1' stroke-width='1'/><path d='M532.5,62.5 C533,66 530,68 525,68.2 M527.5,65.3 L524.5,68.2 L527.5,71' fill='none' stroke='#2f6fc9' stroke-width='1.6'/><path d='M511.6,98.5 H532.5 V119.3 H511.6 Z M511.6,103 H532.5 M511.6,114.8 H532.5 M522,98.5 V103 M522,114.8 V119.3' fill='none' stroke='#707070' stroke-width='1.3'/><path d='M515,108.8 H529' stroke='#5ab0b0' stroke-width='1.6'/><path d='M517,106 L513.8,108.8 L517,111.6 M527,106 L530.2,108.8 L527,111.6' fill='none' stroke='#2f6fc9' stroke-width='1.6'/><path d='M539.5,108.64999999999999 L545.5,108.64999999999999 L542.5,112.55 Z' fill='#555'/><path d='M711.4,66.45 L717.4,66.45 L714.4,69.95 Z' fill='#555'/><path d='M590.3,106.80000000000001 L596.5,106.80000000000001 L593.4,111.0 Z' fill='#555'/><path d='M641.5,103 C645,102 647.5,104 646.5,108.5 C646,111.5 643,114 639,115 L638.5,113.8 C641,112.5 642,111.2 642,109.8 C639.5,109.8 638.5,108 638.8,106 C639.2,104.2 640.2,103.3 641.5,103 Z' fill='#555'/><path d='M678.5,103 H671.8 M674.5,100.5 L671.5,103 L674.5,105.5' fill='none' stroke='#2f6fc9' stroke-width='1.7'/><path d='M698,114 H705 M702.2,111.5 L705.2,114 L702.2,116.5' fill='none' stroke='#2f6fc9' stroke-width='1.7'/><rect x='772.8' y='47.5' width='8.2' height='7.9' fill='#d0652e'/><rect x='773.5' y='56' width='11.3' height='6.2' fill='#3a9ad0' stroke='#2e62c9' stroke-width='1.2'/><rect x='772.8' y='62.7' width='9.9' height='7.9' fill='#d0652e'/><rect x='773.5' y='71' width='4.3' height='6.2' fill='#3a9ad0' stroke='#2e62c9' stroke-width='1.2'/><path d='M761.4,55.4 H798.5 M761.4,62.7 H798.5 M761.4,70.6 H798.5 M772.8,47.5 V77.6 M787,47.5 V77.6' fill='none' stroke='#b5b5b5' stroke-width='1.2'/><rect x='761.4' y='47.5' width='37.1' height='30.1' fill='none' stroke='#9a9a9a' stroke-width='1.6'/><rect x='783.6' y='73.3' width='18.2' height='14.9' fill='#fff' stroke='#8a8a8a' stroke-width='1.5'/><path d='M788.5,78.7 H796.5 M788.5,82.6 H796.5 M795,76 L790,85.5' fill='none' stroke='#444' stroke-width='1.1'/><rect x='860.5' y='58.2' width='28.4' height='22.6' fill='#c8c8c8'/><path d='M851,50.5 H888.9 V80.8 H851 Z M860.5,50.5 V80.8 M869.7,50.5 V58.2 M879.2,50.5 V58.2 M851,58.2 H888.9 M851,65.5 H860.5 M851,73.4 H860.5' fill='none' stroke='#a0a0a0' stroke-width='1'/><path d='M866,66 H872 M866,73 H872 M878,62 V66 H873 M874,70 H879' fill='none' stroke='#c9c9f0' stroke-width='1'/><path d='M861.60,89.10 L873.29,86.72 L881.87,75.48 L894.35,63.21 L888.05,56.79 L875.56,69.07 L864.17,77.45 Z' fill='#ffffff' stroke='#ffffff' stroke-width='2'/><path d='M861.60,89.10 L871.66,86.50 A5.3,5.3 0 0 0 866.65,77.12 Z' fill='#2e8ad8'/><path d='M873.01,85.73 A5.6,5.6 0 0 0 867.08,76.14' fill='none' stroke='#6cc0d8' stroke-width='1'/><path d='M873.19,73.78 L876.75,70.28 L880.68,74.27 L877.11,77.78 Z' fill='#707070' stroke='#505050' stroke-width='0.8'/><path d='M878.04,68.73 L888.03,58.21 L891.20,60.00 L891.51,64.60 L882.24,73.01 Z' fill='#8c8c8c' stroke='#5a5a5a' stroke-width='1'/><rect x='925.3' y='54' width='24.5' height='18' fill='#c8c8c8'/><path d='M918.4,48 H956.7 V78 H918.4 Z M925.3,48 V78 M949.8,48 V78 M918.4,54 H956.7 M918.4,72 H956.7' fill='none' stroke='#a0a0a0' stroke-width='1'/><path d='M929.00,86.30 L940.71,84.02 L949.38,72.85 L962.63,60.03 L956.37,53.57 L943.12,66.38 L931.67,74.68 Z' fill='#ffffff' stroke='#ffffff' stroke-width='2'/><path d='M929.00,86.30 L939.08,83.78 A5.3,5.3 0 0 0 934.15,74.36 Z' fill='#2e8ad8'/><path d='M940.44,83.03 A5.6,5.6 0 0 0 934.59,73.38' fill='none' stroke='#6cc0d8' stroke-width='1'/><path d='M940.71,71.08 L944.30,67.60 L948.20,71.63 L944.60,75.10 Z' fill='#707070' stroke='#505050' stroke-width='0.8'/><path d='M945.60,66.07 L956.35,54.98 L959.50,56.80 L959.78,61.40 L949.77,70.38 Z' fill='#8c8c8c' stroke='#5a5a5a' stroke-width='1'/><path d='M821.1,122.8 L826.9,122.8 L824,126.39999999999999 Z' fill='#555'/><path d='M887.9,122.8 L893.6999999999999,122.8 L890.8,126.39999999999999 Z' fill='#555'/><path d='M958.1,122.8 L963.9,122.8 L961,126.39999999999999 Z' fill='#555'/><path d='M979.5,45.5 H991.6 V49.5 H979.5 Z M985.5,45.5 V49.5 M979.5,58.6 H991.6 V66.1 H979.5 Z M985.5,58.6 V66.1 M979.5,62.3 H991.6' fill='none' stroke='#777' stroke-width='1.1'/><rect x='988' y='52.5' width='11.6' height='3.6' fill='#b9d6ea' stroke='#777' stroke-width='1'/><path d='M986.5,54.2 H981 M983.5,51.8 L980.5,54.2 L983.5,56.6' fill='none' stroke='#2f6fc9' stroke-width='1.6'/><path d='M1055.0,55.2 L1060.6,55.2 L1057.8,58.8 Z' fill='#555'/><path d='M979.5,74.7 H991.6 V78.2 H979.5 Z M985.5,74.7 V78.2 M979.5,87.7 H991.6 V95.3 H979.5 Z M985.5,87.7 V95.3 M979.5,91.5 H991.6' fill='none' stroke='#777' stroke-width='1.1'/><rect x='984.5' y='81.2' width='6' height='3' fill='#c9c0f0' stroke='#777' stroke-width='0.9'/><path d='M990.5,78 L1000.3,88 M1000.3,78 L990.5,88' stroke='#d9532b' stroke-width='1.7'/><path d='M1061.0,83.8 L1066.6,83.8 L1063.8,87.39999999999999 Z' fill='#555'/><path d='M981,105.3 H995 M983.5,103 L980.5,105.3 L983.5,107.6 M992.5,103 L995.5,105.3 L992.5,107.6' fill='none' stroke='#2f6fc9' stroke-width='1.4'/><path d='M979.5,102 V108 M996.7,102 V108' stroke='#5ab0b0' stroke-width='1'/><path d='M979.5,108.3 H999.6 V121.4 H979.5 Z M985.2,108.3 V121.4 M990.5,108.3 V121.4 M995,108.3 V121.4 M979.5,121.4 V125.4 H991 V121.4' fill='none' stroke='#888' stroke-width='1.1'/><rect x='985.8' y='110.5' width='4.5' height='8' fill='#2e62c9'/><path d='M1062.0,112.2 L1067.6,112.2 L1064.8,115.8 Z' fill='#555'/><path d='M1089.5,47.2 H1105.8 V50 M1089.5,47.2 L1098,55.7 L1089.5,64 H1105.8 V61' fill='none' stroke='#333' stroke-width='2'/><path d='M1114.05,54.5 L1121.55,54.5 L1117.8,58.5 Z' fill='#555'/><rect x='1087.8' y='74.3' width='18.6' height='20.7' fill='#fff' stroke='#888' stroke-width='1.1'/><rect x='1087.8' y='74.2' width='18.6' height='2.6' fill='#777'/><path d='M1097.2,80.5 V91' stroke='#2f6fc9' stroke-width='2.2'/><path d='M1092.3,86.5 L1097.2,93 L1102.2,86.5' fill='none' stroke='#2f6fc9' stroke-width='2.2'/><path d='M1112.6,84.0 L1119.6,84.0 L1116.1,87.80000000000001 Z' fill='#555'/><path d='M1088.5,115.5 L1099,105 L1105,110.5 L1094.5,121 Z' fill='#c88c8c' stroke='#f07aa8' stroke-width='1'/><path d='M1091.5,112.5 L1097.5,118' stroke='#f7b0c8' stroke-width='1'/><path d='M1094,121.8 H1108.6' stroke='#777' stroke-width='1.1'/><path d='M1112.6499999999999,112.8 L1119.95,112.8 L1116.3,116.8 Z' fill='#555'/><path d='M1134.5,63 L1141,48.3 L1147.6,63 M1136.6,58.3 H1145.5' fill='none' stroke='#2f7bd9' stroke-width='1.8'/><path d='M1135.4,68.2 H1146 L1135.6,82.2 H1146.2' fill='none' stroke='#9b59d0' stroke-width='1.9'/><path d='M1151.5,57.3 H1172.6 L1164.6,67.4 V76.6 H1159.8 V67.4 Z' fill='#8a8a8a' stroke='#555' stroke-width='1'/><path d='M1155,59 L1161.5,67 V75' fill='none' stroke='#d8d8d8' stroke-width='1'/><path d='M1171.3,122.8 L1177.1000000000001,122.8 L1174.2,126.39999999999999 Z' fill='#555'/><circle cx='1214.3' cy='61.9' r='12.6' fill='none' stroke='#2e6fd6' stroke-width='2.3'/><path d='M1205.5,71.5 L1193.8,83' stroke='#3190d0' stroke-width='4.2' stroke-linecap='round'/><path d='M1230.5,122.8 L1236.3000000000002,122.8 L1233.4,126.39999999999999 Z' fill='#555'/><path d='M86.3,154.5 V147 H93.8' fill='none' stroke='#7a7a7a' stroke-width='1'/><path d='M89.3,150 L94.3,155 M94.3,151.5 V155 H90.8' fill='none' stroke='#7a7a7a' stroke-width='1'/><path d='M335.8,154.3 V146.8 H343.3' fill='none' stroke='#7a7a7a' stroke-width='1'/><path d='M338.8,149.8 L343.8,154.8 M343.8,151.3 V154.8 H340.3' fill='none' stroke='#7a7a7a' stroke-width='1'/><path d='M539.2,154.3 V146.8 H546.7' fill='none' stroke='#7a7a7a' stroke-width='1'/><path d='M542.2,149.8 L547.2,154.8 M547.2,151.3 V154.8 H543.7' fill='none' stroke='#7a7a7a' stroke-width='1'/><path d='M711,154.3 V146.8 H718.5' fill='none' stroke='#7a7a7a' stroke-width='1'/><path d='M714,149.8 L719,154.8 M719,151.3 V154.8 H715.5' fill='none' stroke='#7a7a7a' stroke-width='1'/><path d='M128.95,191.04999999999998 L135.45,191.04999999999998 L132.2,195.35 Z' fill='#50505a'/><rect x='165.8' y='185.5' width='2' height='2' fill='#f2f2f2'/><rect x='165.8' y='189.5' width='2' height='2' fill='#f2f2f2'/><rect x='165.8' y='193.5' width='2' height='2' fill='#f2f2f2'/><rect x='165.8' y='197.5' width='2' height='2' fill='#f2f2f2'/><path d='M207.5,187.5 L221.5,199 M221.5,187.5 L207.5,199' stroke='#b9b9b9' stroke-width='2'/><path d='M257.5,193.5 L263.5,199.3 L274.5,187.2' fill='none' stroke='#bdbdbd' stroke-width='3.2'/><path d='M20.5,225 V241 M8,240.5 H20' stroke='#ffffff' stroke-width='1'/><path d='M2.5,164 V210 M187.5,177 V212' stroke='#f2f2f2' stroke-width='1'/><path d='M642.1,417.1 L642.1,437.5 L646.6,431.9 L650.6,438.9 L653.1,437.2 L649.9,430.7 L657.3,430.6 Z' fill='#000'/></svg>
</body></html>
